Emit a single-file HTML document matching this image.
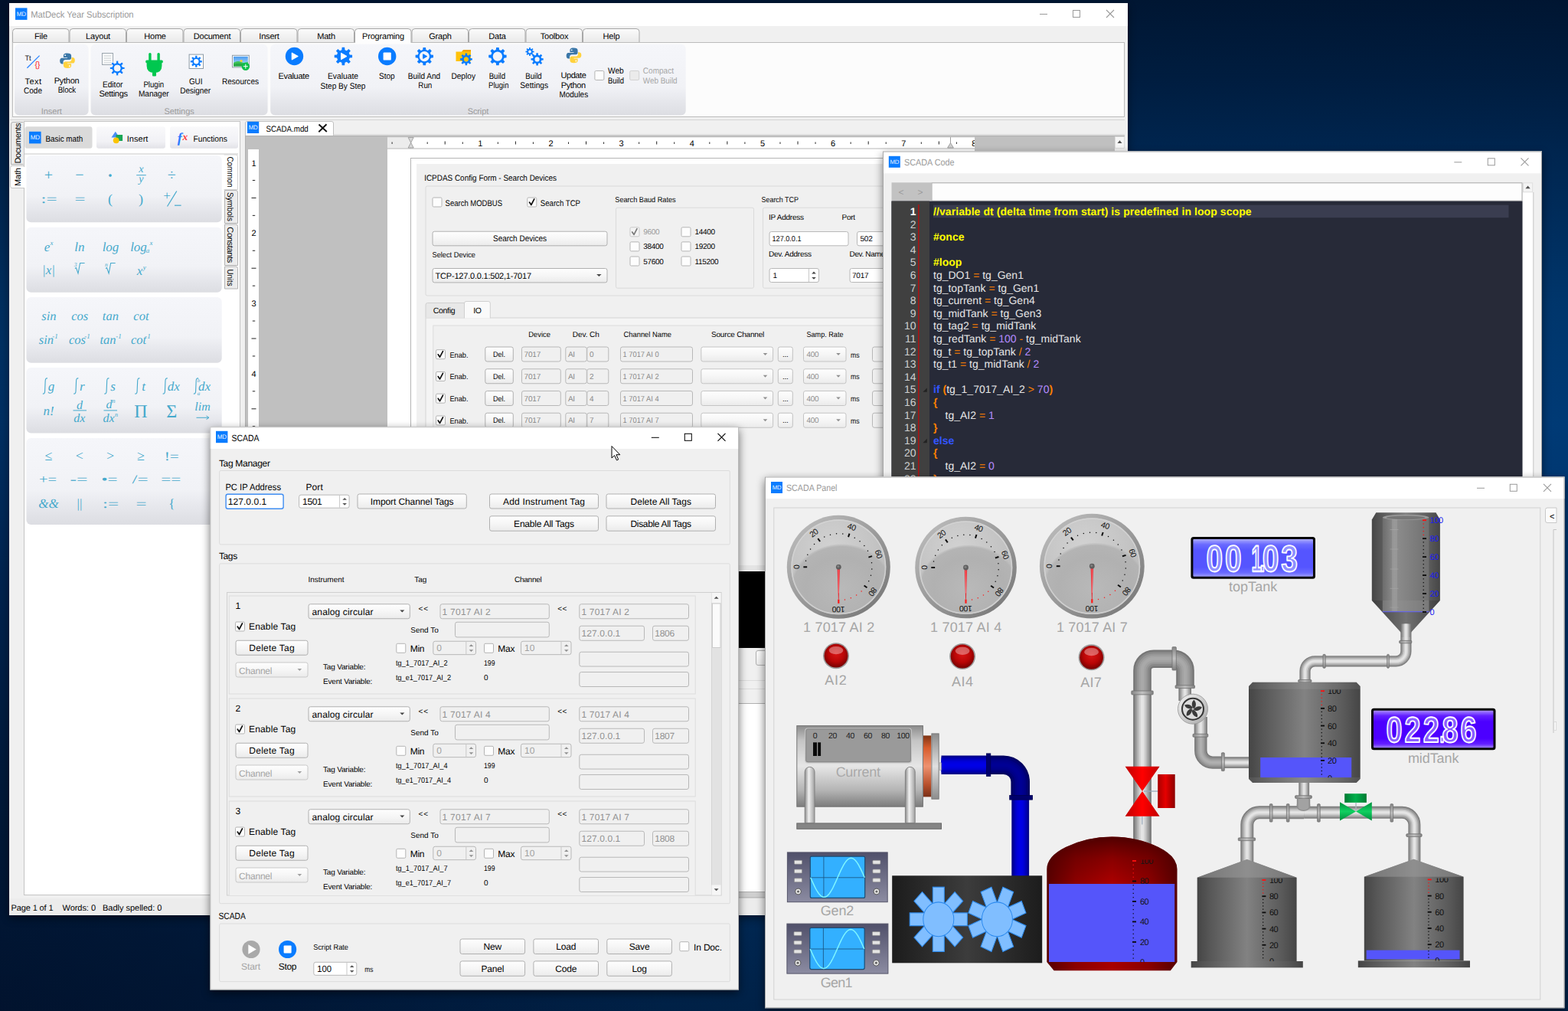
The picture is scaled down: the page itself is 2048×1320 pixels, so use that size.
<!DOCTYPE html>
<html lang="en"><head><meta charset="utf-8"><title>MatDeck SCADA</title>
<style>
html,body{margin:0;padding:0;background:#001a38;overflow:hidden}
svg{display:block}
text{font-family:"Liberation Sans",sans-serif;white-space:pre}
.lserif{font-family:"Liberation Serif",serif}
.lm{font-family:"Liberation Mono",monospace}
.dj{font-family:"DejaVu Sans","Liberation Sans",sans-serif}
</style></head><body>
<svg width="2048" height="1320" viewBox="0 0 2048 1320" text-rendering="geometricPrecision">
<defs>
<linearGradient id="bgv" x1="0" y1="0" x2="0" y2="1">
 <stop offset="0" stop-color="#00132d"/><stop offset="0.08" stop-color="#001b3c"/><stop offset="0.15" stop-color="#00244d"/><stop offset="0.3" stop-color="#00366c"/><stop offset="0.42" stop-color="#003b77"/><stop offset="0.6" stop-color="#003169"/><stop offset="0.8" stop-color="#002b59"/><stop offset="0.92" stop-color="#002853"/><stop offset="1" stop-color="#00234a"/>
</linearGradient>
<radialGradient id="bgr" cx="0.7" cy="0.4" r="0.8">
 <stop offset="0" stop-color="#004a90" stop-opacity="0.0"/><stop offset="1" stop-color="#000c22" stop-opacity="0.25"/>
</radialGradient>
<radialGradient id="bgbl" gradientUnits="userSpaceOnUse" cx="-100" cy="1420" r="980">
 <stop offset="0" stop-color="#020c22" stop-opacity="0.7"/><stop offset="0.45" stop-color="#020e26" stop-opacity="0.48"/><stop offset="1" stop-color="#021030" stop-opacity="0"/>
</radialGradient>
<filter id="shadow" x="-5%" y="-5%" width="110%" height="110%"><feGaussianBlur stdDeviation="6"/></filter>


<clipPath id="rulclip"><rect x="506" y="179" width="767" height="15"/></clipPath>
<linearGradient id="tabg" x1="0" y1="0" x2="0" y2="1"><stop offset="0" stop-color="#fbfbfb"/><stop offset="1" stop-color="#e9e9e9"/></linearGradient>
<linearGradient id="grp" x1="0" y1="0" x2="0" y2="1"><stop offset="0" stop-color="#f5f6fa"/><stop offset="0.6" stop-color="#f1f2f6"/><stop offset="0.8" stop-color="#e6e7ec"/><stop offset="1" stop-color="#dcdde2"/></linearGradient>
<linearGradient id="btng" x1="0" y1="0" x2="0" y2="1"><stop offset="0" stop-color="#f9f9fb"/><stop offset="0.7" stop-color="#f1f1f5"/><stop offset="1" stop-color="#e2e2e7"/></linearGradient>
<linearGradient id="qbtn" x1="0" y1="0" x2="0" y2="1"><stop offset="0" stop-color="#fefefe"/><stop offset="0.5" stop-color="#f6f6f6"/><stop offset="1" stop-color="#ebebeb"/></linearGradient>
<linearGradient id="sky" x1="0" y1="0" x2="0" y2="1"><stop offset="0" stop-color="#4a9cf0"/><stop offset="1" stop-color="#bfe2fb"/></linearGradient>


<clipPath id="tagclip"><rect x="296" y="773.5" width="633" height="395.5"/></clipPath>

<linearGradient id="gring" x1="0.15" y1="0.1" x2="0.85" y2="0.9"><stop offset="0" stop-color="#b8b8b8"/><stop offset="0.5" stop-color="#9a9a9a"/><stop offset="1" stop-color="#7c7c7c"/></linearGradient>
<radialGradient id="gface" cx="0.42" cy="0.30" r="0.75"><stop offset="0" stop-color="#d2d2d2"/><stop offset="0.6" stop-color="#c4c4c4"/><stop offset="1" stop-color="#b8b8b8"/></radialGradient>
<radialGradient id="glens" cx="0.5" cy="0.5" r="0.5"><stop offset="0" stop-color="#b9b9b9"/><stop offset="0.7" stop-color="#b1b1b1"/><stop offset="0.95" stop-color="#b4b4b4"/><stop offset="1" stop-color="#bcbcbc" stop-opacity="0.4"/></radialGradient>
<radialGradient id="ledg" cx="0.5" cy="0.42" r="0.62"><stop offset="0" stop-color="#d81414"/><stop offset="0.55" stop-color="#b80606"/><stop offset="1" stop-color="#6a0000"/></radialGradient>
<linearGradient id="lcd1" x1="0" y1="0" x2="0" y2="1"><stop offset="0" stop-color="#a9a9ff"/><stop offset="0.14" stop-color="#6a6aff"/><stop offset="0.3" stop-color="#5555ff"/><stop offset="0.75" stop-color="#5555ff"/><stop offset="0.9" stop-color="#6a6aff"/><stop offset="1" stop-color="#9d9dff"/></linearGradient>
<linearGradient id="lcd2" x1="0" y1="0" x2="0" y2="1"><stop offset="0" stop-color="#a88cff"/><stop offset="0.14" stop-color="#6420ff"/><stop offset="0.3" stop-color="#4c00ff"/><stop offset="0.75" stop-color="#4c00ff"/><stop offset="0.9" stop-color="#6420ff"/><stop offset="1" stop-color="#9c80ff"/></linearGradient>
<linearGradient id="tankg" x1="0" y1="0" x2="1" y2="0"><stop offset="0" stop-color="#454545"/><stop offset="0.12" stop-color="#565656"/><stop offset="0.5" stop-color="#828282"/><stop offset="0.85" stop-color="#5a5a5a"/><stop offset="1" stop-color="#454545"/></linearGradient>
<linearGradient id="tankg2" x1="0" y1="0" x2="1" y2="0"><stop offset="0" stop-color="#555"/><stop offset="0.5" stop-color="#909090"/><stop offset="1" stop-color="#555"/></linearGradient>
<linearGradient id="glassg" x1="0" y1="0" x2="1" y2="0"><stop offset="0" stop-color="#6c6c6c"/><stop offset="0.25" stop-color="#8e8e8e"/><stop offset="0.5" stop-color="#848484"/><stop offset="1" stop-color="#707070"/></linearGradient>
<radialGradient id="redg" cx="0.5" cy="0.32" r="0.62"><stop offset="0" stop-color="#ad0000"/><stop offset="0.5" stop-color="#960000"/><stop offset="1" stop-color="#500000"/></radialGradient>
<linearGradient id="redh" x1="0" y1="0" x2="1" y2="0"><stop offset="0" stop-color="#560000"/><stop offset="0.22" stop-color="#8a0000"/><stop offset="0.5" stop-color="#a80000"/><stop offset="0.78" stop-color="#8a0000"/><stop offset="1" stop-color="#560000"/></linearGradient>
<linearGradient id="redtop" gradientUnits="userSpaceOnUse" x1="0" y1="1092" x2="0" y2="1150"><stop offset="0" stop-color="#300000" stop-opacity="0.75"/><stop offset="0.5" stop-color="#400000" stop-opacity="0.3"/><stop offset="1" stop-color="#400000" stop-opacity="0"/></linearGradient>
<linearGradient id="motorg" x1="0" y1="0" x2="0" y2="1"><stop offset="0" stop-color="#8c8c8c"/><stop offset="0.18" stop-color="#c4c4c4"/><stop offset="0.5" stop-color="#e6e6e6"/><stop offset="0.8" stop-color="#b4b4b4"/><stop offset="1" stop-color="#7c7c7c"/></linearGradient>
<linearGradient id="legg" x1="0" y1="0" x2="1" y2="0"><stop offset="0" stop-color="#8a8a8a"/><stop offset="0.4" stop-color="#f0f0f0"/><stop offset="1" stop-color="#a0a0a0"/></linearGradient>
<linearGradient id="copg" x1="0" y1="0" x2="0" y2="1"><stop offset="0" stop-color="#7e3414"/><stop offset="0.2" stop-color="#d85c2c"/><stop offset="0.5" stop-color="#ee9270"/><stop offset="0.8" stop-color="#b8502c"/><stop offset="1" stop-color="#7a3018"/></linearGradient>
<linearGradient id="plateg" x1="0" y1="0" x2="0" y2="1"><stop offset="0" stop-color="#8c8c8c"/><stop offset="0.5" stop-color="#e0e0e0"/><stop offset="1" stop-color="#8c8c8c"/></linearGradient>
<linearGradient id="flh" x1="0" y1="0" x2="1" y2="0"><stop offset="0" stop-color="#858585"/><stop offset="0.5" stop-color="#c2c2c2"/><stop offset="1" stop-color="#808080"/></linearGradient>
<linearGradient id="flv" x1="0" y1="0" x2="0" y2="1"><stop offset="0" stop-color="#858585"/><stop offset="0.5" stop-color="#c2c2c2"/><stop offset="1" stop-color="#808080"/></linearGradient>
<linearGradient id="geng" x1="0" y1="0" x2="0" y2="1"><stop offset="0" stop-color="#50506a"/><stop offset="0.5" stop-color="#6e6e86"/><stop offset="1" stop-color="#8c8ca2"/></linearGradient>
<linearGradient id="gbox" x1="0" y1="0" x2="1" y2="0"><stop offset="0" stop-color="#1c1c1c"/><stop offset="0.5" stop-color="#3c3c3c"/><stop offset="1" stop-color="#1c1c1c"/></linearGradient>
<linearGradient id="redv" x1="0" y1="0" x2="1" y2="0"><stop offset="0" stop-color="#c00000"/><stop offset="0.5" stop-color="#ff0000"/><stop offset="1" stop-color="#c00000"/></linearGradient>
<linearGradient id="redact" x1="0" y1="0" x2="1" y2="0"><stop offset="0" stop-color="#a80000"/><stop offset="0.45" stop-color="#e60000"/><stop offset="1" stop-color="#8c0000"/></linearGradient>
<linearGradient id="grnv" x1="0" y1="0" x2="0" y2="1"><stop offset="0" stop-color="#008c3c"/><stop offset="0.5" stop-color="#10d060"/><stop offset="1" stop-color="#008c3c"/></linearGradient>
<linearGradient id="grnact" x1="0" y1="0" x2="1" y2="0"><stop offset="0" stop-color="#007a32"/><stop offset="0.5" stop-color="#00b04c"/><stop offset="1" stop-color="#007a32"/></linearGradient>
<linearGradient id="pumpg" x1="0" y1="0" x2="1" y2="1"><stop offset="0" stop-color="#f4f4f4"/><stop offset="1" stop-color="#a8a8a8"/></linearGradient>
<clipPath id="clipmid"><rect x="1631" y="900.6" width="146" height="114.6"/></clipPath>
<clipPath id="clipred"><rect x="1367" y="1122.6" width="171" height="133.6"/></clipPath>
<clipPath id="clipsl"><rect x="1563" y="1147" width="131" height="108"/></clipPath>
<clipPath id="clipsr"><rect x="1781" y="1146.4" width="131" height="108"/></clipPath>
<clipPath id="clippanel"><rect x="999" y="622.5" width="1044.5" height="694"/></clipPath>
</defs>
<g id="p_bg"><rect x="0" y="0" width="2048" height="1320" fill="url(#bgv)" /><rect x="0" y="0" width="2048" height="1320" fill="url(#bgr)" /><rect x="0" y="0" width="2048" height="1320" fill="url(#bgbl)" /></g>
<g id="p_main"><rect x="12" y="8" width="1461" height="1191" fill="#000" opacity="0.45" filter="url(#shadow)"/><rect x="12" y="4" width="1461" height="1191" fill="#f0f0f0" /><rect x="12" y="1173" width="1461" height="22" fill="#ececec" /><rect x="12" y="4" width="1461" height="30" fill="#ffffff" /><rect x="20" y="10.4" width="15.5" height="15.5" fill="#0a7cff" /><text x="27.75" y="20.94" font-size="8.06" fill="#e8f2ff" text-anchor="middle" letter-spacing="-0.3" font-weight="400">MD</text><text x="40.3" y="23.1" font-size="12" fill="#999" lengthAdjust="spacingAndGlyphs" textLength="134.3" >MatDeck Year Subscription</text><rect x="1358" y="18" width="10" height="1" fill="#9a9a9a" /><rect x="1401.5" y="13.5" width="9" height="9" fill="none" stroke="#9a9a9a" stroke-width="1" /><path d="M1445 13 l10 10 M1455 13 l-10 10" stroke="#9a9a9a" stroke-width="1.1" fill="none"/><path d="M16.5 55.5 V41.5 Q16.5 37.5 20.5 37.5 H86 Q90 37.5 90 41.5 V55.5" fill="url(#tabg)" stroke="#a8a8a8"/><text x="53.5" y="51.2" font-size="11" fill="#000" text-anchor="middle" letter-spacing="-0.2" >File</text><path d="M91 55.5 V41.5 Q91 37.5 95 37.5 H160.5 Q164.5 37.5 164.5 41.5 V55.5" fill="url(#tabg)" stroke="#a8a8a8"/><text x="128" y="51.2" font-size="11" fill="#000" text-anchor="middle" letter-spacing="-0.2" >Layout</text><path d="M165.5 55.5 V41.5 Q165.5 37.5 169.5 37.5 H235 Q239 37.5 239 41.5 V55.5" fill="url(#tabg)" stroke="#a8a8a8"/><text x="202.5" y="51.2" font-size="11" fill="#000" text-anchor="middle" letter-spacing="-0.2" >Home</text><path d="M240 55.5 V41.5 Q240 37.5 244 37.5 H309.5 Q313.5 37.5 313.5 41.5 V55.5" fill="url(#tabg)" stroke="#a8a8a8"/><text x="277" y="51.2" font-size="11" fill="#000" text-anchor="middle" letter-spacing="-0.2" >Document</text><path d="M314.5 55.5 V41.5 Q314.5 37.5 318.5 37.5 H384 Q388 37.5 388 41.5 V55.5" fill="url(#tabg)" stroke="#a8a8a8"/><text x="351.5" y="51.2" font-size="11" fill="#000" text-anchor="middle" letter-spacing="-0.2" >Insert</text><path d="M389 55.5 V41.5 Q389 37.5 393 37.5 H458.5 Q462.5 37.5 462.5 41.5 V55.5" fill="url(#tabg)" stroke="#a8a8a8"/><text x="426" y="51.2" font-size="11" fill="#000" text-anchor="middle" letter-spacing="-0.2" >Math</text><path d="M463.5 57 V41.5 Q463.5 37.5 467.5 37.5 H533 Q537 37.5 537 41.5 V57" fill="#fdfdfd" stroke="#a8a8a8"/><text x="500.5" y="51.2" font-size="11" fill="#000" text-anchor="middle" letter-spacing="-0.2" >Programing</text><path d="M538 55.5 V41.5 Q538 37.5 542 37.5 H607.5 Q611.5 37.5 611.5 41.5 V55.5" fill="url(#tabg)" stroke="#a8a8a8"/><text x="575" y="51.2" font-size="11" fill="#000" text-anchor="middle" letter-spacing="-0.2" >Graph</text><path d="M612.5 55.5 V41.5 Q612.5 37.5 616.5 37.5 H682 Q686 37.5 686 41.5 V55.5" fill="url(#tabg)" stroke="#a8a8a8"/><text x="649.5" y="51.2" font-size="11" fill="#000" text-anchor="middle" letter-spacing="-0.2" >Data</text><path d="M687 55.5 V41.5 Q687 37.5 691 37.5 H756.5 Q760.5 37.5 760.5 41.5 V55.5" fill="url(#tabg)" stroke="#a8a8a8"/><text x="724" y="51.2" font-size="11" fill="#000" text-anchor="middle" letter-spacing="-0.2" >Toolbox</text><path d="M761.5 55.5 V41.5 Q761.5 37.5 765.5 37.5 H831 Q835 37.5 835 41.5 V55.5" fill="url(#tabg)" stroke="#a8a8a8"/><text x="798.5" y="51.2" font-size="11" fill="#000" text-anchor="middle" letter-spacing="-0.2" >Help</text><rect x="16.5" y="55.5" width="1452" height="97" fill="#fcfcfc" stroke="#bcbcbc" stroke-width="1" /><rect x="464" y="55" width="72.5" height="1.5" fill="#fdfdfd" /><rect x="19" y="57.8" width="96.6" height="92.8" fill="url(#grp)" rx="6" /><text x="67.3" y="148.6" font-size="11" fill="#9c9c9c" text-anchor="middle" letter-spacing="-0.1" >Insert</text><rect x="118.6" y="57.8" width="231" height="92.8" fill="url(#grp)" rx="6" /><text x="234.1" y="148.6" font-size="11" fill="#9c9c9c" text-anchor="middle" letter-spacing="-0.1" >Settings</text><rect x="353.2" y="57.8" width="542.5" height="92.8" fill="url(#grp)" rx="6" /><text x="624.45" y="148.6" font-size="11" fill="#9c9c9c" text-anchor="middle" letter-spacing="-0.1" >Script</text><text x="32.5" y="79.3" font-size="9.5" fill="#222" letter-spacing="-0.3" >Tt</text><line x1="35.4" y1="88.8" x2="51.6" y2="72.6" stroke="#2e86ff" stroke-width="1.3" /><text x="45.6" y="87.6" font-size="11" fill="#ff2a2a" letter-spacing="-0.6" >{}</text><text x="32.55" y="109.8" font-size="11" fill="#000" textLength="21.5" >Text</text><text x="31" y="121.9" font-size="11" fill="#000" lengthAdjust="spacingAndGlyphs" textLength="24" >Code</text><g transform="translate(88 79.2) scale(0.98)"><path d="M-0.3 -10 C-5 -10 -5.2 -8 -5.2 -6.5 L-5.2 -4.2 L0 -4.2 L0 -3.4 L-7.2 -3.4 C-9.8 -3.4 -10 -0.5 -10 0.3 C-10 2 -9.5 4.3 -7.2 4.3 L-5.6 4.3 L-5.6 1.8 C-5.6 -0.2 -4 -1.2 -2.6 -1.2 L2.6 -1.2 C4.2 -1.2 5.2 -2.4 5.2 -3.8 L5.2 -6.5 C5.2 -9 3.4 -10 -0.3 -10 Z" fill="#3b77a8"/><circle cx="-2.9" cy="-7.2" r="0.95" fill="#fff"/><path d="M0.3 10 C5 10 5.2 8 5.2 6.5 L5.2 4.2 L0 4.2 L0 3.4 L7.2 3.4 C9.8 3.4 10 0.5 10 -0.3 C10 -2 9.5 -4.3 7.2 -4.3 L5.6 -4.3 L5.6 -1.8 C5.6 0.2 4 1.2 2.6 1.2 L-2.6 1.2 C-4.2 1.2 -5.2 2.4 -5.2 3.8 L-5.2 6.5 C-5.2 9 -3.4 10 0.3 10 Z" fill="#ffd23e"/><circle cx="2.9" cy="7.2" r="0.95" fill="#fff"/></g><text x="70.7" y="108.9" font-size="11" fill="#000" textLength="33" >Python</text><text x="75.7" y="121" font-size="11" fill="#000" lengthAdjust="spacingAndGlyphs" textLength="23.4" >Block</text><rect x="133.5" y="69.5" width="14" height="15" fill="#fff" stroke="#9aa4ad" stroke-width="1" /><rect x="135.5" y="72.5" width="10" height="1" fill="#c4c9ce" /><rect x="135.5" y="75.5" width="10" height="1" fill="#c4c9ce" /><rect x="135.5" y="78.5" width="10" height="1" fill="#c4c9ce" /><rect x="135.5" y="81.5" width="10" height="1" fill="#c4c9ce" /><path d="M159.99 87.31 L163.09 87.51 L163.09 90.49 L159.99 90.69 L159.2 92.61 L161.24 94.94 L159.14 97.04 L156.81 95 L154.89 95.79 L154.69 98.89 L151.71 98.89 L151.51 95.79 L149.59 95 L147.26 97.04 L145.16 94.94 L147.2 92.61 L146.41 90.69 L143.31 90.49 L143.31 87.51 L146.41 87.31 L147.2 85.39 L145.16 83.06 L147.26 80.96 L149.59 83 L151.51 82.21 L151.71 79.11 L154.69 79.11 L154.89 82.21 L156.81 83 L159.14 80.96 L161.24 83.06 L159.2 85.39 Z M149.2 89 a4 4 0 1 0 8 0 a4 4 0 1 0 -8 0 Z" fill="#0a7cff" fill-rule="evenodd" stroke="#f3f4f8" stroke-width="1"/><text x="133.9" y="113.8" font-size="11" fill="#000" lengthAdjust="spacingAndGlyphs" textLength="26.6" >Editor</text><text x="129.45" y="126" font-size="11" fill="#000" textLength="37.5" >Settings</text><rect x="194.2" y="69" width="3.4" height="12" fill="#00c74f" rx="1.6" /><rect x="205.4" y="69" width="3.4" height="12" fill="#00c74f" rx="1.6" /><rect x="190.2" y="78.6" width="22.6" height="3.6" fill="#00c74f" rx="1.5" /><path d="M191.6 81 H211.4 V86 Q211.4 95 201.5 95 Q191.6 95 191.6 86 Z" fill="#00c74f"/><rect x="199" y="94" width="5" height="5.6" fill="#00c74f" rx="1" /><text x="187.45" y="113.8" font-size="11" fill="#000" lengthAdjust="spacingAndGlyphs" textLength="26.7" >Plugin</text><text x="180.9" y="126" font-size="11" fill="#000" lengthAdjust="spacingAndGlyphs" textLength="39.8" >Manager</text><rect x="247.1" y="71.1" width="18.4" height="18.4" fill="#fff" stroke="#8c9aa6" stroke-width="1" /><path d="M261.35 79.05 L263.82 79.17 L263.82 81.43 L261.35 81.55 L260.75 82.98 L262.41 84.82 L260.82 86.41 L258.98 84.75 L257.55 85.35 L257.43 87.82 L255.17 87.82 L255.05 85.35 L253.62 84.75 L251.78 86.41 L250.19 84.82 L251.85 82.98 L251.25 81.55 L248.78 81.43 L248.78 79.17 L251.25 79.05 L251.85 77.62 L250.19 75.78 L251.78 74.19 L253.62 75.85 L255.05 75.25 L255.17 72.78 L257.43 72.78 L257.55 75.25 L258.98 75.85 L260.82 74.19 L262.41 75.78 L260.75 77.62 Z M253.1 80.3 a3.2 3.2 0 1 0 6.4 0 a3.2 3.2 0 1 0 -6.4 0 Z" fill="#0a7cff" fill-rule="evenodd" /><text x="246.9" y="109.7" font-size="11" fill="#000" lengthAdjust="spacingAndGlyphs" textLength="17.6" >GUI</text><text x="235.2" y="122" font-size="11" fill="#000" lengthAdjust="spacingAndGlyphs" textLength="40" >Designer</text><rect x="303.5" y="72.3" width="21.8" height="15.6" fill="#fff" stroke="#8c9aa6" stroke-width="1" /><rect x="305" y="73.8" width="18.8" height="12.6" fill="url(#sky)" /><circle cx="315" cy="79.5" r="1.6" fill="#ffd426"/><path d="M305 82 Q310 78.5 315 81 T323.8 80.5 V86.4 H305 Z" fill="#3ec356"/><path d="M305 84 Q312 81 323.8 84.6 V86.4 H305 Z" fill="#2aa847"/><circle cx="320.8" cy="86.7" r="5.2" fill="#10c04a"/><rect x="317.8" y="86.2" width="6" height="1" fill="#fff" /><rect x="320.3" y="83.7" width="1" height="6" fill="#fff" /><text x="290" y="109.7" font-size="11" fill="#000" lengthAdjust="spacingAndGlyphs" textLength="48" >Resources</text><circle cx="384.5" cy="73.5" r="11.7" fill="#0a7cff"/><path d="M381.19 68.91 L389.33 73.5 L381.19 78.09 Z" fill="#fff" stroke="#fff" stroke-width="1" stroke-linejoin="round"/><text x="363.55" y="103" font-size="11" fill="#000" textLength="40.5" >Evaluate</text><path d="M456.75 71.43 L460.07 71.75 L460.07 75.25 L456.75 75.57 L455.77 77.94 L457.89 80.51 L455.41 82.99 L452.84 80.87 L450.47 81.85 L450.15 85.17 L446.65 85.17 L446.33 81.85 L443.96 80.87 L441.39 82.99 L438.91 80.51 L441.03 77.94 L440.05 75.57 L436.73 75.25 L436.73 71.75 L440.05 71.43 L441.03 69.06 L438.91 66.49 L441.39 64.01 L443.96 66.13 L446.33 65.15 L446.65 61.83 L450.15 61.83 L450.47 65.15 L452.84 66.13 L455.41 64.01 L457.89 66.49 L455.77 69.06 Z" fill="#0a7cff" fill-rule="evenodd" /><path d="M445.54 69.28 L453.02 73.5 L445.54 77.72 Z" fill="#fff" stroke="#fff" stroke-width="1" stroke-linejoin="round"/><text x="428" y="103" font-size="11" fill="#000" lengthAdjust="spacingAndGlyphs" textLength="40" >Evaluate</text><text x="418.5" y="115.5" font-size="11" fill="#000" lengthAdjust="spacingAndGlyphs" textLength="59" >Step By Step</text><circle cx="505.7" cy="73.5" r="11.7" fill="#0a7cff"/><rect x="500.6" y="68.4" width="10.2" height="10.2" fill="#fff" rx="1.2" /><text x="494.9" y="103" font-size="11" fill="#000" lengthAdjust="spacingAndGlyphs" textLength="20.8" >Stop</text><path d="M562.84 71.48 L565.97 71.85 L565.97 75.35 L562.84 75.72 L561.84 78.14 L563.79 80.61 L561.31 83.09 L558.84 81.14 L556.42 82.14 L556.05 85.27 L552.55 85.27 L552.18 82.14 L549.76 81.14 L547.29 83.09 L544.81 80.61 L546.76 78.14 L545.76 75.72 L542.63 75.35 L542.63 71.85 L545.76 71.48 L546.76 69.06 L544.81 66.59 L547.29 64.11 L549.76 66.06 L552.18 65.06 L552.55 61.93 L556.05 61.93 L556.42 65.06 L558.84 66.06 L561.31 64.11 L563.79 66.59 L561.84 69.06 Z M547.7 73.6 a6.6 6.6 0 1 0 13.2 0 a6.6 6.6 0 1 0 -13.2 0 Z" fill="#0a7cff" fill-rule="evenodd" /><path d="M552.67 70.75 L557.73 73.6 L552.67 76.45 Z" fill="#0a7cff" stroke="#0a7cff" stroke-width="1" stroke-linejoin="round"/><text x="532.8" y="103" font-size="11" fill="#000" lengthAdjust="spacingAndGlyphs" textLength="42.4" >Build And</text><text x="546.3" y="115.4" font-size="11" fill="#000" lengthAdjust="spacingAndGlyphs" textLength="18" >Run</text><path d="M595.5 67.5 H603 L605 65.3 H615 V80 H595.5 Z" fill="#ffc20a"/><path d="M603.5 67.2 L605.2 65.3 H615 V67.2 Z" fill="#f09a00"/><path d="M614.33 76.05 L616.81 76.21 L616.81 78.59 L614.33 78.75 L613.7 80.29 L615.34 82.15 L613.65 83.84 L611.79 82.2 L610.25 82.83 L610.09 85.31 L607.71 85.31 L607.55 82.83 L606.01 82.2 L604.15 83.84 L602.46 82.15 L604.1 80.29 L603.47 78.75 L600.99 78.59 L600.99 76.21 L603.47 76.05 L604.1 74.51 L602.46 72.65 L604.15 70.96 L606.01 72.6 L607.55 71.97 L607.71 69.49 L610.09 69.49 L610.25 71.97 L611.79 72.6 L613.65 70.96 L615.34 72.65 L613.7 74.51 Z M606.1 77.4 a2.8 2.8 0 1 0 5.6 0 a2.8 2.8 0 1 0 -5.6 0 Z" fill="#0a7cff" fill-rule="evenodd" /><circle cx="608.9" cy="77.4" r="2.8" fill="#ffc20a"/><text x="589.4" y="103" font-size="11" fill="#000" lengthAdjust="spacingAndGlyphs" textLength="31.6" >Deploy</text><path d="M658.44 71.48 L661.57 71.85 L661.57 75.35 L658.44 75.72 L657.44 78.14 L659.39 80.61 L656.91 83.09 L654.44 81.14 L652.02 82.14 L651.65 85.27 L648.15 85.27 L647.78 82.14 L645.36 81.14 L642.89 83.09 L640.41 80.61 L642.36 78.14 L641.36 75.72 L638.23 75.35 L638.23 71.85 L641.36 71.48 L642.36 69.06 L640.41 66.59 L642.89 64.11 L645.36 66.06 L647.78 65.06 L648.15 61.93 L651.65 61.93 L652.02 65.06 L654.44 66.06 L656.91 64.11 L659.39 66.59 L657.44 69.06 Z M643.7 73.6 a6.2 6.2 0 1 0 12.4 0 a6.2 6.2 0 1 0 -12.4 0 Z" fill="#0a7cff" fill-rule="evenodd" /><text x="638.7" y="103" font-size="11" fill="#000" lengthAdjust="spacingAndGlyphs" textLength="21.4" >Build</text><text x="638.1" y="115.4" font-size="11" fill="#000" lengthAdjust="spacingAndGlyphs" textLength="26.4" >Plugin</text><path d="M695.78 66.56 L697.54 66.67 L697.54 68.33 L695.78 68.44 L695.34 69.51 L696.5 70.83 L695.33 72 L694.01 70.84 L692.94 71.28 L692.83 73.04 L691.17 73.04 L691.06 71.28 L689.99 70.84 L688.67 72 L687.5 70.83 L688.66 69.51 L688.22 68.44 L686.46 68.33 L686.46 66.67 L688.22 66.56 L688.66 65.49 L687.5 64.17 L688.67 63 L689.99 64.16 L691.06 63.72 L691.17 61.96 L692.83 61.96 L692.94 63.72 L694.01 64.16 L695.33 63 L696.5 64.17 L695.34 65.49 Z M690.1 67.5 a1.9 1.9 0 1 0 3.8 0 a1.9 1.9 0 1 0 -3.8 0 Z" fill="#0a7cff" fill-rule="evenodd" /><path d="M707.23 76 L709.71 76.18 L709.71 78.62 L707.23 78.8 L706.57 80.39 L708.2 82.27 L706.47 84 L704.59 82.37 L703 83.03 L702.82 85.51 L700.38 85.51 L700.2 83.03 L698.61 82.37 L696.73 84 L695 82.27 L696.63 80.39 L695.97 78.8 L693.49 78.62 L693.49 76.18 L695.97 76 L696.63 74.41 L695 72.53 L696.73 70.8 L698.61 72.43 L700.2 71.77 L700.38 69.29 L702.82 69.29 L703 71.77 L704.59 72.43 L706.47 70.8 L708.2 72.53 L706.57 74.41 Z M698.5 77.4 a3.1 3.1 0 1 0 6.2 0 a3.1 3.1 0 1 0 -6.2 0 Z" fill="#0a7cff" fill-rule="evenodd" /><text x="686.3" y="103" font-size="11" fill="#000" lengthAdjust="spacingAndGlyphs" textLength="21.4" >Build</text><text x="679.3" y="115.4" font-size="11" fill="#000" lengthAdjust="spacingAndGlyphs" textLength="36.8" >Settings</text><g transform="translate(749.5 72.4) scale(0.98)"><path d="M-0.3 -10 C-5 -10 -5.2 -8 -5.2 -6.5 L-5.2 -4.2 L0 -4.2 L0 -3.4 L-7.2 -3.4 C-9.8 -3.4 -10 -0.5 -10 0.3 C-10 2 -9.5 4.3 -7.2 4.3 L-5.6 4.3 L-5.6 1.8 C-5.6 -0.2 -4 -1.2 -2.6 -1.2 L2.6 -1.2 C4.2 -1.2 5.2 -2.4 5.2 -3.8 L5.2 -6.5 C5.2 -9 3.4 -10 -0.3 -10 Z" fill="#3b77a8"/><circle cx="-2.9" cy="-7.2" r="0.95" fill="#fff"/><path d="M0.3 10 C5 10 5.2 8 5.2 6.5 L5.2 4.2 L0 4.2 L0 3.4 L7.2 3.4 C9.8 3.4 10 0.5 10 -0.3 C10 -2 9.5 -4.3 7.2 -4.3 L5.6 -4.3 L5.6 -1.8 C5.6 0.2 4 1.2 2.6 1.2 L-2.6 1.2 C-4.2 1.2 -5.2 2.4 -5.2 3.8 L-5.2 6.5 C-5.2 9 -3.4 10 0.3 10 Z" fill="#ffd23e"/><circle cx="2.9" cy="7.2" r="0.95" fill="#fff"/></g><text x="732.4" y="102" font-size="11" fill="#000" textLength="33.4" >Update</text><text x="732.7" y="114.5" font-size="11" fill="#000" textLength="32.4" >Python</text><text x="730.5" y="126.5" font-size="11" fill="#000" lengthAdjust="spacingAndGlyphs" textLength="37.6" >Modules</text><rect x="776.9" y="92.5" width="12" height="12" fill="#fdfdfd" stroke="#b4b4b4" stroke-width="1" rx="1.5" /><text x="794" y="96.4" font-size="11" fill="#000" lengthAdjust="spacingAndGlyphs" textLength="20.8" >Web</text><text x="794" y="108.5" font-size="11" fill="#000" lengthAdjust="spacingAndGlyphs" textLength="20.9" >Build</text><rect x="822.7" y="92.5" width="12" height="12" fill="#ebebeb" stroke="#d2d2d2" stroke-width="1" rx="1.5" /><text x="839.8" y="96.4" font-size="11" fill="#a6a6a6" lengthAdjust="spacingAndGlyphs" textLength="40.2" >Compact</text><text x="839.8" y="108.5" font-size="11" fill="#a6a6a6" lengthAdjust="spacingAndGlyphs" textLength="44.8" >Web Build</text><rect x="13" y="156" width="1456" height="1" fill="#d4d4d4" /><path d="M30.5 159.5 H17 Q14.5 159.5 14.5 162 V214.5 H30.5" fill="#ececec" stroke="#b4b4b4"/><g transform="translate(22.6 187) rotate(-90)"><text x="-26.5" y="3.96" font-size="11" fill="#000" textLength="53" >Documents</text></g><path d="M31.5 216.5 H16 Q13.5 216.5 13.5 219 V243 Q13.5 245.5 16 245.5 H31.5" fill="#fff" stroke="#c8c8c8"/><g transform="translate(22.6 231) rotate(-90)"><text x="-12" y="3.96" font-size="11" fill="#000" textLength="24" >Math</text></g><rect x="31.5" y="158.5" width="282" height="1010" fill="#ffffff" stroke="#c4c4c4" stroke-width="1" /><rect x="31" y="218" width="1" height="27" fill="#fff" /><rect x="32.5" y="165.3" width="88" height="28.4" fill="#dadada" rx="3" /><rect x="38" y="171.8" width="15.6" height="15.6" fill="#0a7cff" /><text x="45.8" y="182.41" font-size="8.11" fill="#e8f2ff" text-anchor="middle" letter-spacing="-0.3" font-weight="400">MD</text><text x="59.5" y="184.7" font-size="11" fill="#000" lengthAdjust="spacingAndGlyphs" textLength="48.7" >Basic math</text><rect x="126" y="165.3" width="90" height="28.4" fill="url(#btng)" rx="3" /><path d="M145.5 179.5 L150.8 171.8 L156 179.5 Z" fill="#4a8df6"/><rect x="151.5" y="176" width="8.6" height="8" fill="#1aa655" /><circle cx="151.7" cy="183.3" r="3.9" fill="#fbc400"/><text x="165.8" y="184.7" font-size="11" fill="#000" textLength="27.6" >Insert</text><rect x="222" y="165.3" width="89" height="28.4" fill="url(#btng)" rx="3" /><text x="231.8" y="185.8" font-size="18" fill="#2b7bff" font-weight="bold" font-style="italic" class="lserif" >f</text><text x="238.6" y="183.4" font-size="13.5" fill="#ff3b3b" font-weight="bold" font-style="italic" class="lserif" >x</text><text x="252.5" y="184.7" font-size="11" fill="#000" lengthAdjust="spacingAndGlyphs" textLength="44.3" >Functions</text><rect x="32" y="200.5" width="279" height="1" fill="#c8c8c8" /><path d="M292.5 202 H308 Q310.5 202 310.5 204.5 V247.5 H292.5" fill="#fff" stroke="#d4d4d4"/><g transform="translate(301.4 224.5) rotate(90)"><text x="-20" y="3.96" font-size="11" fill="#000" lengthAdjust="spacingAndGlyphs" textLength="40" >Common</text></g><path d="M293.5 248.5 H308 Q310.5 248.5 310.5 251 V291.5 H293.5 Z" fill="#ececec" stroke="#b4b4b4"/><g transform="translate(301.4 270) rotate(90)"><text x="-19" y="3.96" font-size="11" fill="#000" lengthAdjust="spacingAndGlyphs" textLength="38" >Symbols</text></g><path d="M293.5 293 H308 Q310.5 293 310.5 295.5 V346.5 H293.5 Z" fill="#ececec" stroke="#b4b4b4"/><g transform="translate(301.4 319.75) rotate(90)"><text x="-23.5" y="3.96" font-size="11" fill="#000" textLength="47" >Constants</text></g><path d="M293.5 348 H308 Q310.5 348 310.5 350.5 V377 H293.5 Z" fill="#ececec" stroke="#b4b4b4"/><g transform="translate(301.4 362.5) rotate(90)"><text x="-11" y="3.96" font-size="11" fill="#000" lengthAdjust="spacingAndGlyphs" textLength="22" >Units</text></g><rect x="34.5" y="203" width="255.2" height="87.3" fill="url(#grp)" rx="6" /><rect x="34.5" y="296.7" width="255.2" height="85.1" fill="url(#grp)" rx="6" /><rect x="34.5" y="388" width="255.2" height="85.8" fill="url(#grp)" rx="6" /><rect x="34.5" y="480" width="255.2" height="85.5" fill="url(#grp)" rx="6" /><rect x="34.5" y="572" width="255.2" height="113" fill="url(#grp)" rx="6" /><text x="63.5" y="235" font-size="20" fill="#45a9cc" text-anchor="middle" class="lserif" >+</text><text x="103.9" y="234.5" font-size="20" fill="#45a9cc" text-anchor="middle" class="lserif" >−</text><text x="144" y="234.3" font-size="15" fill="#45a9cc" text-anchor="middle" class="lserif" >•</text><text x="184.3" y="225.08" font-size="14" fill="#45a9cc" text-anchor="middle" font-style="italic" class="lserif" >x</text><rect x="178.2" y="228.2" width="12.6" height="1" fill="#45a9cc" /><text x="184.3" y="238.1" font-size="14" fill="#45a9cc" text-anchor="middle" font-style="italic" class="lserif" >y</text><text x="224.3" y="235" font-size="20" fill="#45a9cc" text-anchor="middle" class="lserif" >÷</text><text x="53.5" y="264.8" font-size="16" fill="#45a9cc" textLength="21" class="lserif" lengthAdjust="spacingAndGlyphs">:=</text><text x="97.4" y="264.8" font-size="16" fill="#45a9cc" textLength="14" class="lserif" lengthAdjust="spacingAndGlyphs">=</text><text x="144" y="266.4" font-size="18" fill="#45a9cc" text-anchor="middle" class="lserif" >(</text><text x="184" y="266.4" font-size="18" fill="#45a9cc" text-anchor="middle" class="lserif" >)</text><text x="218" y="261.1" font-size="17" fill="#45a9cc" text-anchor="middle" class="lserif" >+</text><line x1="218.5" y1="269.5" x2="230.8" y2="249.5" stroke="#45a9cc" stroke-width="1.2" /><rect x="228" y="267.6" width="8.6" height="1.2" fill="#45a9cc" /><text x="61.5" y="328.1" font-size="17" fill="#45a9cc" text-anchor="middle" font-style="italic" class="lserif" >e</text><text x="67.5" y="320.2" font-size="9" fill="#45a9cc" text-anchor="middle" font-style="italic" class="lserif" >x</text><text x="103.9" y="328.1" font-size="17" fill="#45a9cc" text-anchor="middle" font-style="italic" class="lserif" >ln</text><text x="144.5" y="328.1" font-size="17" fill="#45a9cc" text-anchor="middle" font-style="italic" class="lserif" >log</text><text x="181" y="328.1" font-size="17" fill="#45a9cc" text-anchor="middle" font-style="italic" class="lserif" >log</text><text x="193" y="329.7" font-size="9" fill="#45a9cc" text-anchor="middle" font-style="italic" class="lserif" >a</text><text x="197.6" y="320.2" font-size="9" fill="#45a9cc" text-anchor="middle" font-style="italic" class="lserif" >x</text><text x="63.5" y="358.1" font-size="17" fill="#45a9cc" text-anchor="middle" font-style="italic" class="lserif" >|x|</text><path d="M97.9 350.5 l1.5 -1 l2.6 7.5 l2.6 -13.5 h6" fill="none" stroke="#45a9cc" stroke-width="1.1"/><text x="98.7" y="348.25" font-size="7.5" fill="#45a9cc" text-anchor="middle" font-style="italic" class="lserif" >3</text><path d="M138 350.5 l1.5 -1 l2.6 7.5 l2.6 -13.5 h6" fill="none" stroke="#45a9cc" stroke-width="1.1"/><text x="138.8" y="348.25" font-size="7.5" fill="#45a9cc" text-anchor="middle" font-style="italic" class="lserif" >n</text><text x="182.4" y="358.6" font-size="17" fill="#45a9cc" text-anchor="middle" font-style="italic" class="lserif" >x</text><text x="188.8" y="351.7" font-size="9" fill="#45a9cc" text-anchor="middle" font-style="italic" class="lserif" >y</text><text x="63.9" y="418.43" font-size="16.5" fill="#45a9cc" text-anchor="middle" font-style="italic" class="lserif" >sin</text><text x="60.5" y="448.62" font-size="16.5" fill="#45a9cc" text-anchor="middle" font-style="italic" class="lserif" >sin</text><text x="72" y="442.2" font-size="9" fill="#45a9cc" text-anchor="middle" font-style="italic" class="lserif" >-1</text><text x="104.3" y="418.43" font-size="16.5" fill="#45a9cc" text-anchor="middle" font-style="italic" class="lserif" >cos</text><text x="100.9" y="448.62" font-size="16.5" fill="#45a9cc" text-anchor="middle" font-style="italic" class="lserif" >cos</text><text x="113.9" y="442.2" font-size="9" fill="#45a9cc" text-anchor="middle" font-style="italic" class="lserif" >-1</text><text x="144.4" y="418.43" font-size="16.5" fill="#45a9cc" text-anchor="middle" font-style="italic" class="lserif" >tan</text><text x="141" y="448.62" font-size="16.5" fill="#45a9cc" text-anchor="middle" font-style="italic" class="lserif" >tan</text><text x="155" y="442.2" font-size="9" fill="#45a9cc" text-anchor="middle" font-style="italic" class="lserif" >-1</text><text x="184.4" y="418.43" font-size="16.5" fill="#45a9cc" text-anchor="middle" font-style="italic" class="lserif" >cot</text><text x="181" y="448.62" font-size="16.5" fill="#45a9cc" text-anchor="middle" font-style="italic" class="lserif" >cot</text><text x="193" y="442.2" font-size="9" fill="#45a9cc" text-anchor="middle" font-style="italic" class="lserif" >-1</text><path d="M62 494 q-2.6 -0.6 -2.8 3 l-0.6 14 q-0.2 3.6 -2.8 3" fill="none" stroke="#45a9cc" stroke-width="1.1"/><text x="67" y="509.6" font-size="17" fill="#45a9cc" text-anchor="middle" font-style="italic" class="lserif" >g</text><path d="M102.4 494 q-2.6 -0.6 -2.8 3 l-0.6 14 q-0.2 3.6 -2.8 3" fill="none" stroke="#45a9cc" stroke-width="1.1"/><text x="107.4" y="509.6" font-size="17" fill="#45a9cc" text-anchor="middle" font-style="italic" class="lserif" >r</text><path d="M142.5 494 q-2.6 -0.6 -2.8 3 l-0.6 14 q-0.2 3.6 -2.8 3" fill="none" stroke="#45a9cc" stroke-width="1.1"/><text x="147.5" y="509.6" font-size="17" fill="#45a9cc" text-anchor="middle" font-style="italic" class="lserif" >s</text><path d="M182.5 494 q-2.6 -0.6 -2.8 3 l-0.6 14 q-0.2 3.6 -2.8 3" fill="none" stroke="#45a9cc" stroke-width="1.1"/><text x="187.5" y="509.6" font-size="17" fill="#45a9cc" text-anchor="middle" font-style="italic" class="lserif" >t</text><path d="M218.8 494 q-2.6 -0.6 -2.8 3 l-0.6 14 q-0.2 3.6 -2.8 3" fill="none" stroke="#45a9cc" stroke-width="1.1"/><text x="226.8" y="509.6" font-size="17" fill="#45a9cc" text-anchor="middle" font-style="italic" class="lserif" >dx</text><path d="M259 494 q-2.6 -0.6 -2.8 3 l-0.6 14 q-0.2 3.6 -2.8 3" fill="none" stroke="#45a9cc" stroke-width="1.1"/><text x="267" y="509.6" font-size="17" fill="#45a9cc" text-anchor="middle" font-style="italic" class="lserif" >dx</text><text x="259.5" y="499.1" font-size="7" fill="#45a9cc" text-anchor="middle" font-style="italic" class="lserif" >b</text><text x="259.5" y="515.6" font-size="7" fill="#45a9cc" text-anchor="middle" font-style="italic" class="lserif" >a</text><text x="63.5" y="541.6" font-size="17" fill="#45a9cc" text-anchor="middle" font-style="italic" class="lserif" >n!</text><text x="103.9" y="533.8" font-size="16" fill="#45a9cc" text-anchor="middle" font-style="italic" class="lserif" >d</text><rect x="95.5" y="535.4" width="17.5" height="1" fill="#45a9cc" /><text x="103.9" y="550.8" font-size="16" fill="#45a9cc" text-anchor="middle" font-style="italic" class="lserif" >dx</text><text x="142.5" y="533.3" font-size="16" fill="#45a9cc" text-anchor="middle" font-style="italic" class="lserif" >d</text><text x="148.5" y="526.4" font-size="8" fill="#45a9cc" text-anchor="middle" font-style="italic" class="lserif" >n</text><rect x="135.5" y="535.4" width="17.5" height="1" fill="#45a9cc" /><text x="142" y="550.8" font-size="16" fill="#45a9cc" text-anchor="middle" font-style="italic" class="lserif" >dx</text><text x="152" y="544.4" font-size="8" fill="#45a9cc" text-anchor="middle" font-style="italic" class="lserif" >n</text><text x="184" y="544.92" font-size="24" fill="#45a9cc" text-anchor="middle" class="lserif" >Π</text><text x="224.3" y="544.92" font-size="24" fill="#45a9cc" text-anchor="middle" class="lserif" >Σ</text><text x="264.5" y="536.3" font-size="16" fill="#45a9cc" text-anchor="middle" font-style="italic" class="lserif" >lim</text><line x1="256.5" y1="545.3" x2="272.5" y2="545.3" stroke="#45a9cc" stroke-width="1" /><path d="M269.5 543 l3.5 2.3 l-3.5 2.3" fill="none" stroke="#45a9cc"/><text x="63.5" y="601.4" font-size="18" fill="#45a9cc" text-anchor="middle" class="lserif" >≤</text><text x="103.9" y="601.4" font-size="18" fill="#45a9cc" text-anchor="middle" class="lserif" >&lt;</text><text x="144" y="601.4" font-size="18" fill="#45a9cc" text-anchor="middle" class="lserif" >&gt;</text><text x="184" y="601.4" font-size="18" fill="#45a9cc" text-anchor="middle" class="lserif" >≥</text><text x="214.8" y="600.8" font-size="16" fill="#45a9cc" textLength="19" class="lserif" lengthAdjust="spacingAndGlyphs">!=</text><text x="51" y="631.12" font-size="16" fill="#45a9cc" textLength="23" class="lserif" lengthAdjust="spacingAndGlyphs">+=</text><text x="91.4" y="631.12" font-size="16" fill="#45a9cc" textLength="23" class="lserif" lengthAdjust="spacingAndGlyphs">-=</text><text x="132.5" y="631.12" font-size="16" fill="#45a9cc" textLength="21" class="lserif" lengthAdjust="spacingAndGlyphs">•=</text><text x="172.5" y="631.12" font-size="16" fill="#45a9cc" textLength="21" class="lserif" lengthAdjust="spacingAndGlyphs">/=</text><text x="210.3" y="631.12" font-size="16" fill="#45a9cc" textLength="26" class="lserif" lengthAdjust="spacingAndGlyphs">==</text><text x="63.5" y="663.1" font-size="17" fill="#45a9cc" text-anchor="middle" font-style="italic" class="lserif" >&amp;&amp;</text><text x="103.9" y="663.1" font-size="17" fill="#45a9cc" text-anchor="middle" class="lserif" >||</text><text x="134" y="662.8" font-size="16" fill="#45a9cc" textLength="21" class="lserif" lengthAdjust="spacingAndGlyphs">:=</text><text x="177.5" y="662.8" font-size="16" fill="#45a9cc" textLength="14" class="lserif" lengthAdjust="spacingAndGlyphs">=</text><text x="224.3" y="663.1" font-size="17" fill="#45a9cc" text-anchor="middle" class="lserif" >{</text><path d="M320.5 177 V161 Q320.5 158.5 323 158.5 H433 Q435.5 158.5 435.5 161 V177" fill="#fff" stroke="#c0c0c0"/><rect x="323" y="158.8" width="15.2" height="15.2" fill="#0a7cff" /><text x="330.6" y="169.14" font-size="7.9" fill="#e8f2ff" text-anchor="middle" letter-spacing="-0.3" font-weight="400">MD</text><text x="347.5" y="172" font-size="11" fill="#000" lengthAdjust="spacingAndGlyphs" textLength="55.3" >SCADA.mdd</text><path d="M416.5 162.5 L426.8 172 M426.5 162.3 L416.3 172.2" stroke="#111" stroke-width="1.9" fill="none"/><rect x="435" y="175.5" width="1034" height="1" fill="#cccccc" /><rect x="320.5" y="177.5" width="1148" height="995" fill="#c0c0c0" stroke="#b0b0b0" stroke-width="1" /><rect x="506" y="194" width="767" height="975" fill="#ffffff" /><rect x="324" y="195" width="14" height="974" fill="#ffffff" /><text x="331.5" y="216.5" font-size="11" fill="#000" text-anchor="middle" >1</text><rect x="329.8" y="234.95" width="3.4" height="1" fill="#222" /><rect x="328.5" y="257.9" width="6" height="1" fill="#222" /><rect x="329.8" y="280.85" width="3.4" height="1" fill="#222" /><text x="331.5" y="308.3" font-size="11" fill="#000" text-anchor="middle" >2</text><rect x="329.8" y="326.75" width="3.4" height="1" fill="#222" /><rect x="328.5" y="349.7" width="6" height="1" fill="#222" /><rect x="329.8" y="372.65" width="3.4" height="1" fill="#222" /><text x="331.5" y="400.1" font-size="11" fill="#000" text-anchor="middle" >3</text><rect x="329.8" y="418.55" width="3.4" height="1" fill="#222" /><rect x="328.5" y="441.5" width="6" height="1" fill="#222" /><rect x="329.8" y="464.45" width="3.4" height="1" fill="#222" /><text x="331.5" y="491.9" font-size="11" fill="#000" text-anchor="middle" >4</text><rect x="329.8" y="510.35" width="3.4" height="1" fill="#222" /><rect x="328.5" y="533.3" width="6" height="1" fill="#222" /><rect x="329.8" y="556.25" width="3.4" height="1" fill="#222" /><text x="331.5" y="583.7" font-size="11" fill="#000" text-anchor="middle" >5</text><rect x="329.8" y="602.15" width="3.4" height="1" fill="#222" /><rect x="328.5" y="625.1" width="6" height="1" fill="#222" /><rect x="329.8" y="648.05" width="3.4" height="1" fill="#222" /><text x="331.5" y="675.5" font-size="11" fill="#000" text-anchor="middle" >6</text><rect x="329.8" y="693.95" width="3.4" height="1" fill="#222" /><rect x="328.5" y="716.9" width="6" height="1" fill="#222" /><rect x="329.8" y="739.85" width="3.4" height="1" fill="#222" /><text x="331.5" y="767.3" font-size="11" fill="#000" text-anchor="middle" >7</text><rect x="329.8" y="785.75" width="3.4" height="1" fill="#222" /><rect x="328.5" y="808.7" width="6" height="1" fill="#222" /><rect x="329.8" y="831.65" width="3.4" height="1" fill="#222" /><text x="331.5" y="859.1" font-size="11" fill="#000" text-anchor="middle" >8</text><rect x="329.8" y="877.55" width="3.4" height="1" fill="#222" /><rect x="328.5" y="900.5" width="6" height="1" fill="#222" /><rect x="329.8" y="923.45" width="3.4" height="1" fill="#222" /><text x="331.5" y="950.9" font-size="11" fill="#000" text-anchor="middle" >9</text><rect x="329.8" y="969.35" width="3.4" height="1" fill="#222" /><rect x="328.5" y="992.3" width="6" height="1" fill="#222" /><rect x="329.8" y="1015.25" width="3.4" height="1" fill="#222" /><text x="331.5" y="1042.7" font-size="11" fill="#000" text-anchor="middle" >10</text><rect x="329.8" y="1061.15" width="3.4" height="1" fill="#222" /><rect x="328.5" y="1084.1" width="6" height="1" fill="#222" /><rect x="329.8" y="1107.05" width="3.4" height="1" fill="#222" /><text x="331.5" y="1134.5" font-size="11" fill="#000" text-anchor="middle" >11</text><rect x="329.8" y="1152.95" width="3.4" height="1" fill="#222" /><rect x="506" y="179" width="767" height="15" fill="#ffffff" /><rect x="506" y="179" width="31" height="15" fill="#ececec" /><rect x="506" y="193.5" width="767" height="1" fill="#b8b8b8" /><rect x="506" y="178.5" width="767" height="1" fill="#d0d0d0" /><rect x="511.6" y="185.5" width="1" height="2.4" fill="#222" /><rect x="557.68" y="185.5" width="1" height="2.4" fill="#222" /><rect x="580.72" y="184.5" width="1" height="4" fill="#222" /><rect x="603.76" y="185.5" width="1" height="2.4" fill="#222" /><g clip-path="url(#rulclip)"><text x="627.3" y="190.5" font-size="11" fill="#000" text-anchor="middle" >1</text></g><rect x="649.84" y="185.5" width="1" height="2.4" fill="#222" /><rect x="672.88" y="184.5" width="1" height="4" fill="#222" /><rect x="695.92" y="185.5" width="1" height="2.4" fill="#222" /><g clip-path="url(#rulclip)"><text x="719.46" y="190.5" font-size="11" fill="#000" text-anchor="middle" >2</text></g><rect x="742" y="185.5" width="1" height="2.4" fill="#222" /><rect x="765.04" y="184.5" width="1" height="4" fill="#222" /><rect x="788.08" y="185.5" width="1" height="2.4" fill="#222" /><g clip-path="url(#rulclip)"><text x="811.62" y="190.5" font-size="11" fill="#000" text-anchor="middle" >3</text></g><rect x="834.16" y="185.5" width="1" height="2.4" fill="#222" /><rect x="857.2" y="184.5" width="1" height="4" fill="#222" /><rect x="880.24" y="185.5" width="1" height="2.4" fill="#222" /><g clip-path="url(#rulclip)"><text x="903.78" y="190.5" font-size="11" fill="#000" text-anchor="middle" >4</text></g><rect x="926.32" y="185.5" width="1" height="2.4" fill="#222" /><rect x="949.36" y="184.5" width="1" height="4" fill="#222" /><rect x="972.4" y="185.5" width="1" height="2.4" fill="#222" /><g clip-path="url(#rulclip)"><text x="995.94" y="190.5" font-size="11" fill="#000" text-anchor="middle" >5</text></g><rect x="1018.48" y="185.5" width="1" height="2.4" fill="#222" /><rect x="1041.52" y="184.5" width="1" height="4" fill="#222" /><rect x="1064.56" y="185.5" width="1" height="2.4" fill="#222" /><g clip-path="url(#rulclip)"><text x="1088.1" y="190.5" font-size="11" fill="#000" text-anchor="middle" >6</text></g><rect x="1110.64" y="185.5" width="1" height="2.4" fill="#222" /><rect x="1133.68" y="184.5" width="1" height="4" fill="#222" /><rect x="1156.72" y="185.5" width="1" height="2.4" fill="#222" /><g clip-path="url(#rulclip)"><text x="1180.26" y="190.5" font-size="11" fill="#000" text-anchor="middle" >7</text></g><rect x="1202.8" y="185.5" width="1" height="2.4" fill="#222" /><rect x="1225.84" y="184.5" width="1" height="4" fill="#222" /><rect x="1248.88" y="185.5" width="1" height="2.4" fill="#222" /><g clip-path="url(#rulclip)"><text x="1272.42" y="190.5" font-size="11" fill="#000" text-anchor="middle" >8</text></g><path d="M533.2 179.5 H540.2 L536.7 186.3 L540.2 193 H533.2 L536.7 186.3 Z" fill="#d8d8d8" stroke="#909090" stroke-width="0.8"/><rect x="1241" y="179" width="1" height="8" fill="#a0a0a0" /><path d="M1237.6 193 L1241.5 186.5 L1245.4 193 Z" fill="#d0d0d0" stroke="#909090" stroke-width="0.8"/><rect x="1456" y="178" width="13" height="991" fill="#f0f0f0" /><rect x="1456.5" y="178.5" width="12" height="15" fill="#f6f6f6" stroke="#dadada" stroke-width="1" /><path d="M1459.5 187 L1462.5 183.2 L1465.5 187 Z" fill="#505050"/><rect x="536.5" y="206.5" width="736" height="962" fill="#ffffff" stroke="#b4b4b4" stroke-width="1" /><rect x="544" y="214" width="729" height="955" fill="#f0f0f0" /><text x="554.2" y="235.8" font-size="11" fill="#000" lengthAdjust="spacingAndGlyphs" textLength="172.8" >ICPDAS Config Form - Search Devices</text><rect x="556" y="243" width="719" height="143" fill="none" stroke="#dadada" stroke-width="1" rx="2" /><rect x="565" y="258" width="12" height="12" fill="#fdfdfd" stroke="#b4b4b4" stroke-width="1" rx="1.5" /><text x="581.6" y="268.6" font-size="11" fill="#000" lengthAdjust="spacingAndGlyphs" textLength="74.4" >Search MODBUS</text><rect x="688.8" y="258" width="12" height="12" fill="#fdfdfd" stroke="#b4b4b4" stroke-width="1" rx="1.5" /><path d="M691.5 264.1 l2.3 3.4 l4 -7.6" fill="none" stroke="#101010" stroke-width="1.7" stroke-linecap="round" stroke-linejoin="round"/><text x="705.8" y="268.6" font-size="11" fill="#000" lengthAdjust="spacingAndGlyphs" textLength="52.2" >Search TCP</text><rect x="565" y="302.2" width="228" height="18.6" fill="url(#qbtn)" stroke="#b0b0b0" stroke-width="1" rx="2.5" /><text x="644" y="315.46" font-size="11" fill="#000" lengthAdjust="spacingAndGlyphs" textLength="70" >Search Devices</text><text x="564.5" y="336.3" font-size="10" fill="#000" lengthAdjust="spacingAndGlyphs" textLength="56.5" >Select Device</text><rect x="565" y="350.5" width="228" height="18.4" fill="url(#qbtn)" stroke="#b0b0b0" stroke-width="1" rx="2.5" /><text x="568.6" y="363.6" font-size="11" fill="#000" textLength="125.4" >TCP-127.0.0.1:502,1-7017</text><path d="M779.2 357.9 h6.4 l-3.2 3.2 Z" fill="#444"/><text x="803.3" y="263.8" font-size="10" fill="#000" lengthAdjust="spacingAndGlyphs" textLength="79.3" >Search Baud Rates</text><rect x="804.5" y="271.2" width="180" height="105" fill="none" stroke="#dadada" stroke-width="1" rx="2" /><rect x="823" y="296.8" width="12" height="12" fill="#f4f4f4" stroke="#c8c8c8" stroke-width="1" rx="1.5" /><path d="M825.7 302.9 l2.3 3.4 l4 -7.6" fill="none" stroke="#7a7a7a" stroke-width="1.7" stroke-linecap="round" stroke-linejoin="round"/><text x="840.3" y="306.3" font-size="10" fill="#9a9a9a" letter-spacing="-0.3" >9600</text><rect x="890" y="296.8" width="12" height="12" fill="#fdfdfd" stroke="#b4b4b4" stroke-width="1" rx="1.5" /><text x="907.5" y="306.3" font-size="10" fill="#000" letter-spacing="-0.3" >14400</text><rect x="823" y="315.9" width="12" height="12" fill="#fdfdfd" stroke="#b4b4b4" stroke-width="1" rx="1.5" /><text x="840.3" y="325.4" font-size="10" fill="#000" letter-spacing="-0.3" >38400</text><rect x="890" y="315.9" width="12" height="12" fill="#fdfdfd" stroke="#b4b4b4" stroke-width="1" rx="1.5" /><text x="907.5" y="325.4" font-size="10" fill="#000" letter-spacing="-0.3" >19200</text><rect x="823" y="335" width="12" height="12" fill="#fdfdfd" stroke="#b4b4b4" stroke-width="1" rx="1.5" /><text x="840.3" y="344.5" font-size="10" fill="#000" letter-spacing="-0.3" >57600</text><rect x="890" y="335" width="12" height="12" fill="#fdfdfd" stroke="#b4b4b4" stroke-width="1" rx="1.5" /><text x="907.5" y="344.5" font-size="10" fill="#000" letter-spacing="-0.3" >115200</text><text x="994.5" y="263.8" font-size="10" fill="#000" lengthAdjust="spacingAndGlyphs" textLength="48.5" >Search TCP</text><rect x="996.5" y="271.2" width="199" height="105" fill="none" stroke="#dadada" stroke-width="1" rx="2" /><text x="1004" y="287" font-size="10" fill="#000" textLength="46" >IP Address</text><text x="1099.5" y="287" font-size="10" fill="#000" textLength="17.5" >Port</text><rect x="1005" y="302.5" width="103" height="18.3" fill="#fff" stroke="#b8b8b8" stroke-width="1" rx="2.5" /><text x="1008.5" y="315.25" font-size="10" fill="#000" lengthAdjust="spacingAndGlyphs" textLength="38" >127.0.0.1</text><rect x="1119.5" y="302.5" width="59" height="18.3" fill="#fff" stroke="#b8b8b8" stroke-width="1" rx="2.5" /><text x="1123.5" y="315.25" font-size="10" fill="#000" letter-spacing="-0.2" >502</text><text x="1004" y="334.5" font-size="10" fill="#000" textLength="56" >Dev. Address</text><text x="1109.5" y="334.5" font-size="10" fill="#000" textLength="46.5" >Dev. Name</text><rect x="1005" y="350.5" width="64.5" height="18" fill="#fff" stroke="#b8b8b8" stroke-width="1" rx="2.5" /><text x="1009.5" y="363.1" font-size="10" fill="#000" letter-spacing="-0.2" >1</text><rect x="1056" y="351" width="1" height="17" fill="#c8c8c8" /><path d="M1060.2 357.4 h5.6 l-2.8 -2.8 Z" fill="#444"/><path d="M1060.2 362 h5.6 l-2.8 2.8 Z" fill="#444"/><rect x="1110" y="350.5" width="69" height="18" fill="#fff" stroke="#b8b8b8" stroke-width="1" rx="2.5" /><text x="1113" y="363.1" font-size="10" fill="#000" letter-spacing="-0.2" >7017</text><rect x="556" y="415" width="719" height="599" fill="#f4f4f4" stroke="#d4d4d4" stroke-width="1" /><path d="M556 414.5 V398 Q556 395.5 558.5 395.5 H606.5 V414.5" fill="#e8e8e8" stroke="#d0d0d0"/><text x="565.8" y="409.3" font-size="10.5" fill="#000" textLength="28.7" >Config</text><path d="M606.5 415.5 V396 Q606.5 393.5 609 393.5 H637.8 Q640.3 393.5 640.3 396 V415.5" fill="#fafafa" stroke="#d0d0d0"/><text x="618.2" y="408.5" font-size="10.5" fill="#000" textLength="10.6" >IO</text><rect x="565.8" y="425" width="699" height="579" fill="#f0f0f0" stroke="#dcdcdc" stroke-width="1" /><text x="690.3" y="440" font-size="10" fill="#000" lengthAdjust="spacingAndGlyphs" textLength="28.7" >Device</text><text x="747.8" y="440" font-size="10" fill="#000" textLength="35" >Dev. Ch</text><text x="814.5" y="440" font-size="10" fill="#000" lengthAdjust="spacingAndGlyphs" textLength="62.5" >Channel Name</text><text x="929" y="440" font-size="10" fill="#000" textLength="69.3" >Source Channel</text><text x="1053.5" y="440" font-size="10" fill="#000" lengthAdjust="spacingAndGlyphs" textLength="48" >Samp. Rate</text><rect x="569.5" y="456.7" width="12" height="12" fill="#fdfdfd" stroke="#b4b4b4" stroke-width="1" rx="1.5" /><path d="M572.2 462.8 l2.3 3.4 l4 -7.6" fill="none" stroke="#101010" stroke-width="1.7" stroke-linecap="round" stroke-linejoin="round"/><text x="587.5" y="466.7" font-size="10" fill="#000" lengthAdjust="spacingAndGlyphs" textLength="24" >Enab.</text><rect x="633.8" y="453" width="36.5" height="19" fill="url(#qbtn)" stroke="#b0b0b0" stroke-width="1" rx="2.5" /><text x="644.05" y="466.1" font-size="10" fill="#000" lengthAdjust="spacingAndGlyphs" textLength="16" >Del.</text><rect x="681.5" y="453" width="50.8" height="19" fill="#f0f0f0" stroke="#b8b8b8" stroke-width="1" rx="2.5" /><text x="684.6" y="466.1" font-size="10" fill="#8a8a8a" letter-spacing="-0.2" >7017</text><rect x="738.8" y="453" width="27.5" height="19" fill="#f0f0f0" stroke="#b8b8b8" stroke-width="1" rx="2.5" /><text x="741.9" y="466.1" font-size="10" fill="#8a8a8a" letter-spacing="-0.2" >AI</text><rect x="766.8" y="453" width="28" height="19" fill="#f0f0f0" stroke="#b8b8b8" stroke-width="1" rx="2.5" /><text x="769.9" y="466.1" font-size="10" fill="#8a8a8a" letter-spacing="-0.2" >0</text><rect x="810.5" y="453" width="94" height="19" fill="#f0f0f0" stroke="#b8b8b8" stroke-width="1" rx="2.5" /><text x="813.6" y="466.1" font-size="10" fill="#8a8a8a" lengthAdjust="spacingAndGlyphs" textLength="47" >1 7017 AI 0</text><rect x="915.8" y="453" width="93.8" height="19" fill="url(#qbtn)" stroke="#c4c4c4" stroke-width="1" rx="2.5" /><path d="M996.7 461.1 h5.6 l-2.8 2.8 Z" fill="#909090"/><rect x="1016.3" y="453" width="19" height="19" fill="url(#qbtn)" stroke="#c0c0c0" stroke-width="1" rx="2.5" /><text x="1025.8" y="466.1" font-size="10" fill="#000" text-anchor="middle" letter-spacing="-0.2" >...</text><rect x="1049.5" y="453" width="55.5" height="19" fill="url(#qbtn)" stroke="#c4c4c4" stroke-width="1" rx="2.5" /><text x="1053.5" y="466.1" font-size="10" fill="#909090" letter-spacing="-0.3" >400</text><path d="M1092.2 461.1 h5.6 l-2.8 2.8 Z" fill="#909090"/><text x="1111" y="466.7" font-size="10" fill="#000" lengthAdjust="spacingAndGlyphs" textLength="11.5" >ms</text><rect x="1139.5" y="453" width="59" height="19" fill="#f0f0f0" stroke="#b8b8b8" stroke-width="1" rx="2.5" /><rect x="569.5" y="485.45" width="12" height="12" fill="#fdfdfd" stroke="#b4b4b4" stroke-width="1" rx="1.5" /><path d="M572.2 491.55 l2.3 3.4 l4 -7.6" fill="none" stroke="#101010" stroke-width="1.7" stroke-linecap="round" stroke-linejoin="round"/><text x="587.5" y="495.45" font-size="10" fill="#000" lengthAdjust="spacingAndGlyphs" textLength="24" >Enab.</text><rect x="633.8" y="481.75" width="36.5" height="19" fill="url(#qbtn)" stroke="#b0b0b0" stroke-width="1" rx="2.5" /><text x="644.05" y="494.85" font-size="10" fill="#000" lengthAdjust="spacingAndGlyphs" textLength="16" >Del.</text><rect x="681.5" y="481.75" width="50.8" height="19" fill="#f0f0f0" stroke="#b8b8b8" stroke-width="1" rx="2.5" /><text x="684.6" y="494.85" font-size="10" fill="#8a8a8a" letter-spacing="-0.2" >7017</text><rect x="738.8" y="481.75" width="27.5" height="19" fill="#f0f0f0" stroke="#b8b8b8" stroke-width="1" rx="2.5" /><text x="741.9" y="494.85" font-size="10" fill="#8a8a8a" letter-spacing="-0.2" >AI</text><rect x="766.8" y="481.75" width="28" height="19" fill="#f0f0f0" stroke="#b8b8b8" stroke-width="1" rx="2.5" /><text x="769.9" y="494.85" font-size="10" fill="#8a8a8a" letter-spacing="-0.2" >2</text><rect x="810.5" y="481.75" width="94" height="19" fill="#f0f0f0" stroke="#b8b8b8" stroke-width="1" rx="2.5" /><text x="813.6" y="494.85" font-size="10" fill="#8a8a8a" lengthAdjust="spacingAndGlyphs" textLength="47" >1 7017 AI 2</text><rect x="915.8" y="481.75" width="93.8" height="19" fill="url(#qbtn)" stroke="#c4c4c4" stroke-width="1" rx="2.5" /><path d="M996.7 489.85 h5.6 l-2.8 2.8 Z" fill="#909090"/><rect x="1016.3" y="481.75" width="19" height="19" fill="url(#qbtn)" stroke="#c0c0c0" stroke-width="1" rx="2.5" /><text x="1025.8" y="494.85" font-size="10" fill="#000" text-anchor="middle" letter-spacing="-0.2" >...</text><rect x="1049.5" y="481.75" width="55.5" height="19" fill="url(#qbtn)" stroke="#c4c4c4" stroke-width="1" rx="2.5" /><text x="1053.5" y="494.85" font-size="10" fill="#909090" letter-spacing="-0.3" >400</text><path d="M1092.2 489.85 h5.6 l-2.8 2.8 Z" fill="#909090"/><text x="1111" y="495.45" font-size="10" fill="#000" lengthAdjust="spacingAndGlyphs" textLength="11.5" >ms</text><rect x="1139.5" y="481.75" width="59" height="19" fill="#f0f0f0" stroke="#b8b8b8" stroke-width="1" rx="2.5" /><rect x="569.5" y="514.2" width="12" height="12" fill="#fdfdfd" stroke="#b4b4b4" stroke-width="1" rx="1.5" /><path d="M572.2 520.3 l2.3 3.4 l4 -7.6" fill="none" stroke="#101010" stroke-width="1.7" stroke-linecap="round" stroke-linejoin="round"/><text x="587.5" y="524.2" font-size="10" fill="#000" lengthAdjust="spacingAndGlyphs" textLength="24" >Enab.</text><rect x="633.8" y="510.5" width="36.5" height="19" fill="url(#qbtn)" stroke="#b0b0b0" stroke-width="1" rx="2.5" /><text x="644.05" y="523.6" font-size="10" fill="#000" lengthAdjust="spacingAndGlyphs" textLength="16" >Del.</text><rect x="681.5" y="510.5" width="50.8" height="19" fill="#f0f0f0" stroke="#b8b8b8" stroke-width="1" rx="2.5" /><text x="684.6" y="523.6" font-size="10" fill="#8a8a8a" letter-spacing="-0.2" >7017</text><rect x="738.8" y="510.5" width="27.5" height="19" fill="#f0f0f0" stroke="#b8b8b8" stroke-width="1" rx="2.5" /><text x="741.9" y="523.6" font-size="10" fill="#8a8a8a" letter-spacing="-0.2" >AI</text><rect x="766.8" y="510.5" width="28" height="19" fill="#f0f0f0" stroke="#b8b8b8" stroke-width="1" rx="2.5" /><text x="769.9" y="523.6" font-size="10" fill="#8a8a8a" letter-spacing="-0.2" >4</text><rect x="810.5" y="510.5" width="94" height="19" fill="#f0f0f0" stroke="#b8b8b8" stroke-width="1" rx="2.5" /><text x="813.6" y="523.6" font-size="10" fill="#8a8a8a" lengthAdjust="spacingAndGlyphs" textLength="47" >1 7017 AI 4</text><rect x="915.8" y="510.5" width="93.8" height="19" fill="url(#qbtn)" stroke="#c4c4c4" stroke-width="1" rx="2.5" /><path d="M996.7 518.6 h5.6 l-2.8 2.8 Z" fill="#909090"/><rect x="1016.3" y="510.5" width="19" height="19" fill="url(#qbtn)" stroke="#c0c0c0" stroke-width="1" rx="2.5" /><text x="1025.8" y="523.6" font-size="10" fill="#000" text-anchor="middle" letter-spacing="-0.2" >...</text><rect x="1049.5" y="510.5" width="55.5" height="19" fill="url(#qbtn)" stroke="#c4c4c4" stroke-width="1" rx="2.5" /><text x="1053.5" y="523.6" font-size="10" fill="#909090" letter-spacing="-0.3" >400</text><path d="M1092.2 518.6 h5.6 l-2.8 2.8 Z" fill="#909090"/><text x="1111" y="524.2" font-size="10" fill="#000" lengthAdjust="spacingAndGlyphs" textLength="11.5" >ms</text><rect x="1139.5" y="510.5" width="59" height="19" fill="#f0f0f0" stroke="#b8b8b8" stroke-width="1" rx="2.5" /><rect x="569.5" y="542.95" width="12" height="12" fill="#fdfdfd" stroke="#b4b4b4" stroke-width="1" rx="1.5" /><path d="M572.2 549.05 l2.3 3.4 l4 -7.6" fill="none" stroke="#101010" stroke-width="1.7" stroke-linecap="round" stroke-linejoin="round"/><text x="587.5" y="552.95" font-size="10" fill="#000" lengthAdjust="spacingAndGlyphs" textLength="24" >Enab.</text><rect x="633.8" y="539.25" width="36.5" height="19" fill="url(#qbtn)" stroke="#b0b0b0" stroke-width="1" rx="2.5" /><text x="644.05" y="552.35" font-size="10" fill="#000" lengthAdjust="spacingAndGlyphs" textLength="16" >Del.</text><rect x="681.5" y="539.25" width="50.8" height="19" fill="#f0f0f0" stroke="#b8b8b8" stroke-width="1" rx="2.5" /><text x="684.6" y="552.35" font-size="10" fill="#8a8a8a" letter-spacing="-0.2" >7017</text><rect x="738.8" y="539.25" width="27.5" height="19" fill="#f0f0f0" stroke="#b8b8b8" stroke-width="1" rx="2.5" /><text x="741.9" y="552.35" font-size="10" fill="#8a8a8a" letter-spacing="-0.2" >AI</text><rect x="766.8" y="539.25" width="28" height="19" fill="#f0f0f0" stroke="#b8b8b8" stroke-width="1" rx="2.5" /><text x="769.9" y="552.35" font-size="10" fill="#8a8a8a" letter-spacing="-0.2" >7</text><rect x="810.5" y="539.25" width="94" height="19" fill="#f0f0f0" stroke="#b8b8b8" stroke-width="1" rx="2.5" /><text x="813.6" y="552.35" font-size="10" fill="#8a8a8a" lengthAdjust="spacingAndGlyphs" textLength="47" >1 7017 AI 7</text><rect x="915.8" y="539.25" width="93.8" height="19" fill="url(#qbtn)" stroke="#c4c4c4" stroke-width="1" rx="2.5" /><path d="M996.7 547.35 h5.6 l-2.8 2.8 Z" fill="#909090"/><rect x="1016.3" y="539.25" width="19" height="19" fill="url(#qbtn)" stroke="#c0c0c0" stroke-width="1" rx="2.5" /><text x="1025.8" y="552.35" font-size="10" fill="#000" text-anchor="middle" letter-spacing="-0.2" >...</text><rect x="1049.5" y="539.25" width="55.5" height="19" fill="url(#qbtn)" stroke="#c4c4c4" stroke-width="1" rx="2.5" /><text x="1053.5" y="552.35" font-size="10" fill="#909090" letter-spacing="-0.3" >400</text><path d="M1092.2 547.35 h5.6 l-2.8 2.8 Z" fill="#909090"/><text x="1111" y="552.95" font-size="10" fill="#000" lengthAdjust="spacingAndGlyphs" textLength="11.5" >ms</text><rect x="1139.5" y="539.25" width="59" height="19" fill="#f0f0f0" stroke="#b8b8b8" stroke-width="1" rx="2.5" /><rect x="940" y="738" width="340" height="6" fill="#e4e4e4" /><rect x="940" y="746" width="340" height="100" fill="#000" /><rect x="940" y="846" width="340" height="72" fill="#f0f0f0" /><rect x="987.5" y="849.5" width="59" height="19" fill="url(#qbtn)" stroke="#b0b0b0" stroke-width="1" rx="2.5" /><rect x="940" y="888" width="333" height="1" fill="#dcdcdc" /><rect x="940" y="899" width="333" height="1" fill="#dcdcdc" /><rect x="940" y="918" width="333" height="1" fill="#b0b0b0" /><rect x="940" y="919" width="333" height="246" fill="#ffffff" /><rect x="321" y="1164" width="1147" height="9" fill="#cfcfcf" /><rect x="321" y="1164" width="1147" height="1" fill="#b0b0b0" /><rect x="321" y="1171" width="1147" height="1" fill="#bcbcbc" /><text x="14.6" y="1189" font-size="11" fill="#000" textLength="54.9" >Page 1 of 1</text><text x="81.5" y="1189" font-size="11" fill="#000" textLength="43.5" >Words: 0</text><text x="134" y="1189" font-size="11" fill="#000" textLength="77.4" >Badly spelled: 0</text></g>
<g id="p_code"><rect x="1153" y="201.5" width="861" height="502.5" fill="#000" opacity="0.5" filter="url(#shadow)"/><rect x="1153" y="197.5" width="861" height="502.5" fill="#f0f0f0" /><rect x="1153" y="197.5" width="861" height="28.8" fill="#ffffff" /><rect x="1153.5" y="198" width="860" height="501.5" fill="none" stroke="#a8a8a8" stroke-width="1" /><rect x="1160.8" y="203.8" width="15" height="15" fill="#0a7cff" /><text x="1168.3" y="214" font-size="7.8" fill="#e8f2ff" text-anchor="middle" letter-spacing="-0.3" font-weight="400">MD</text><text x="1181" y="215.8" font-size="12" fill="#999" lengthAdjust="spacingAndGlyphs" textLength="65.5" >SCADA Code</text><rect x="1899.3" y="211.3" width="10" height="1" fill="#9a9a9a" /><rect x="1943.3" y="206.8" width="9" height="9" fill="none" stroke="#9a9a9a" stroke-width="1" /><path d="M1986.5 206.3 l10 10 M1996.5 206.3 l-10 10" stroke="#9a9a9a" stroke-width="1.1" fill="none"/><rect x="1164.5" y="238.3" width="52" height="24.4" fill="#c2c2c2" /><text x="1173.5" y="255" font-size="12" fill="#9a9a9a" >&lt;</text><text x="1198.5" y="255" font-size="12" fill="#9a9a9a" >&gt;</text><rect x="1217" y="238.8" width="771" height="23.4" fill="#fdfdfd" stroke="#a8a8a8" stroke-width="1" /><rect x="1164.5" y="262.6" width="824" height="440" fill="#272a38" /><rect x="1164.5" y="262.6" width="49.5" height="440" fill="#404040" /><rect x="1199.3" y="267" width="1.1" height="436" fill="#d80000" /><rect x="1219" y="267.6" width="751.5" height="16.6" fill="#3a3d50" /><rect x="1989" y="238.3" width="13.3" height="464" fill="#ffffff" /><rect x="1989.5" y="238.8" width="12.3" height="12" fill="#f4f4f4" stroke="#dcdcdc" stroke-width="1" /><path d="M1992.4 246.3 L1995.6 242.6 L1998.8 246.3 Z" fill="#505050"/><rect x="2002.3" y="251" width="1" height="451" fill="#c8c8c8" /><text x="1196.5" y="280.9" font-size="14" fill="#ffffff" text-anchor="end" font-weight="bold" >1</text><text x="1219" y="280.9" font-size="14" xml:space="preserve" textLength="415.6"><tspan fill="#ffff00" font-weight="bold">//variable dt (delta time from start) is predefined in loop scope</tspan></text><text x="1196.5" y="297.5" font-size="14" fill="#cfcfcf" text-anchor="end" >2</text><text x="1196.5" y="314.1" font-size="14" fill="#cfcfcf" text-anchor="end" >3</text><text x="1219" y="314.1" font-size="14" xml:space="preserve"><tspan fill="#ffff00" font-weight="bold">#once</tspan></text><text x="1196.5" y="330.7" font-size="14" fill="#cfcfcf" text-anchor="end" >4</text><text x="1196.5" y="347.3" font-size="14" fill="#cfcfcf" text-anchor="end" >5</text><text x="1219" y="347.3" font-size="14" xml:space="preserve"><tspan fill="#ffff00" font-weight="bold">#loop</tspan></text><text x="1196.5" y="363.9" font-size="14" fill="#cfcfcf" text-anchor="end" >6</text><text x="1219" y="363.9" font-size="14" xml:space="preserve"><tspan fill="#e6e6e6">tg_DO1 </tspan><tspan fill="#ff8000">= </tspan><tspan fill="#e6e6e6">tg_Gen1</tspan></text><text x="1196.5" y="380.5" font-size="14" fill="#cfcfcf" text-anchor="end" >7</text><text x="1219" y="380.5" font-size="14" xml:space="preserve"><tspan fill="#e6e6e6">tg_topTank </tspan><tspan fill="#ff8000">= </tspan><tspan fill="#e6e6e6">tg_Gen1</tspan></text><text x="1196.5" y="397.1" font-size="14" fill="#cfcfcf" text-anchor="end" >8</text><text x="1219" y="397.1" font-size="14" xml:space="preserve"><tspan fill="#e6e6e6">tg_current </tspan><tspan fill="#ff8000">= </tspan><tspan fill="#e6e6e6">tg_Gen4</tspan></text><text x="1196.5" y="413.7" font-size="14" fill="#cfcfcf" text-anchor="end" >9</text><text x="1219" y="413.7" font-size="14" xml:space="preserve"><tspan fill="#e6e6e6">tg_midTank </tspan><tspan fill="#ff8000">= </tspan><tspan fill="#e6e6e6">tg_Gen3</tspan></text><text x="1196.5" y="430.3" font-size="14" fill="#cfcfcf" text-anchor="end" >10</text><text x="1219" y="430.3" font-size="14" xml:space="preserve"><tspan fill="#e6e6e6">tg_tag2 </tspan><tspan fill="#ff8000">= </tspan><tspan fill="#e6e6e6">tg_midTank</tspan></text><text x="1196.5" y="446.9" font-size="14" fill="#cfcfcf" text-anchor="end" >11</text><text x="1219" y="446.9" font-size="14" xml:space="preserve"><tspan fill="#e6e6e6">tg_redTank </tspan><tspan fill="#ff8000">= </tspan><tspan fill="#b48cff">100 </tspan><tspan fill="#ff8000">- </tspan><tspan fill="#e6e6e6">tg_midTank</tspan></text><text x="1196.5" y="463.5" font-size="14" fill="#cfcfcf" text-anchor="end" >12</text><text x="1219" y="463.5" font-size="14" xml:space="preserve"><tspan fill="#e6e6e6">tg_t </tspan><tspan fill="#ff8000">= </tspan><tspan fill="#e6e6e6">tg_topTank </tspan><tspan fill="#ff8000">/ </tspan><tspan fill="#b48cff">2</tspan></text><text x="1196.5" y="480.1" font-size="14" fill="#cfcfcf" text-anchor="end" >13</text><text x="1219" y="480.1" font-size="14" xml:space="preserve"><tspan fill="#e6e6e6">tg_t1 </tspan><tspan fill="#ff8000">= </tspan><tspan fill="#e6e6e6">tg_midTank </tspan><tspan fill="#ff8000">/ </tspan><tspan fill="#b48cff">2</tspan></text><text x="1196.5" y="496.7" font-size="14" fill="#cfcfcf" text-anchor="end" >14</text><text x="1196.5" y="513.3" font-size="14" fill="#cfcfcf" text-anchor="end" >15</text><text x="1219" y="513.3" font-size="14" xml:space="preserve"><tspan fill="#3355ff" font-weight="bold">if </tspan><tspan fill="#ff8000" font-weight="bold">(</tspan><tspan fill="#e6e6e6">tg_1_7017_AI_2 </tspan><tspan fill="#ff8000">&gt; </tspan><tspan fill="#b48cff">70</tspan><tspan fill="#ff8000" font-weight="bold">)</tspan></text><path d="M1205.4 511.8 l5.4 0 l0 -5.4 Z" fill="#222"/><text x="1196.5" y="529.9" font-size="14" fill="#cfcfcf" text-anchor="end" >16</text><text x="1219" y="529.9" font-size="14" xml:space="preserve"><tspan fill="#ff8000" font-weight="bold">{</tspan></text><text x="1196.5" y="546.5" font-size="14" fill="#cfcfcf" text-anchor="end" >17</text><text x="1219" y="546.5" font-size="14" xml:space="preserve"><tspan fill="#e6e6e6">    tg_AI2 </tspan><tspan fill="#ff8000">= </tspan><tspan fill="#b48cff">1</tspan></text><text x="1196.5" y="563.1" font-size="14" fill="#cfcfcf" text-anchor="end" >18</text><text x="1219" y="563.1" font-size="14" xml:space="preserve"><tspan fill="#ff8000" font-weight="bold">}</tspan></text><text x="1196.5" y="579.7" font-size="14" fill="#cfcfcf" text-anchor="end" >19</text><text x="1219" y="579.7" font-size="14" xml:space="preserve"><tspan fill="#3355ff" font-weight="bold">else</tspan></text><path d="M1205.4 578.2 l5.4 0 l0 -5.4 Z" fill="#222"/><text x="1196.5" y="596.3" font-size="14" fill="#cfcfcf" text-anchor="end" >20</text><text x="1219" y="596.3" font-size="14" xml:space="preserve"><tspan fill="#ff8000" font-weight="bold">{</tspan></text><text x="1196.5" y="612.9" font-size="14" fill="#cfcfcf" text-anchor="end" >21</text><text x="1219" y="612.9" font-size="14" xml:space="preserve"><tspan fill="#e6e6e6">    tg_AI2 </tspan><tspan fill="#ff8000">= </tspan><tspan fill="#b48cff">0</tspan></text><text x="1196.5" y="629.5" font-size="14" fill="#cfcfcf" text-anchor="end" >22</text><text x="1219" y="629.5" font-size="14" xml:space="preserve"><tspan fill="#ff8000" font-weight="bold">}</tspan></text></g>
<g id="p_scada"><rect x="274.3" y="561.2" width="690.7" height="735.4" fill="#000" opacity="0.55" filter="url(#shadow)"/><rect x="274.3" y="557.2" width="690.7" height="735.4" fill="#f0f0f0" /><rect x="274.3" y="557.2" width="690.7" height="28.7" fill="#ffffff" /><rect x="274.8" y="557.7" width="689.7" height="734.4" fill="none" stroke="#8a8a8a" stroke-width="1" opacity="0.55"/><rect x="282" y="562.8" width="15.4" height="15.4" fill="#0a7cff" /><text x="289.7" y="573.27" font-size="8.01" fill="#e8f2ff" text-anchor="middle" letter-spacing="-0.3" font-weight="400">MD</text><text x="302.5" y="575.6" font-size="12" fill="#000" lengthAdjust="spacingAndGlyphs" textLength="35.9" >SCADA</text><rect x="850.8" y="570.8" width="10" height="1" fill="#000" /><rect x="894.3" y="566.3" width="9" height="9" fill="none" stroke="#000" stroke-width="1" /><path d="M937.5 565.8 l10 10 M947.5 565.8 l-10 10" stroke="#000" stroke-width="1.1" fill="none"/><path d="M799 582.5 v15.5 l3.6 -3.4 l2.9 6.3 l2.2 -1 l-2.8 -6.2 h4.9 Z" fill="#fff" stroke="#000" stroke-width="1" stroke-linejoin="round"/><text x="285.9" y="608.6" font-size="12" fill="#000" textLength="67" >Tag Manager</text><rect x="286.7" y="614.5" width="666.6" height="96.4" fill="none" stroke="#dcdcdc" stroke-width="1" rx="1.5" /><text x="294.4" y="640" font-size="12" fill="#000" lengthAdjust="spacingAndGlyphs" textLength="72.6" >PC IP Address</text><text x="399.4" y="640" font-size="12" fill="#000" textLength="22.4" >Port</text><rect x="295.1" y="645.2" width="75" height="19" fill="#fff" stroke="#3f8df2" stroke-width="1.4" rx="2.5" /><text x="297.7" y="659.4" font-size="12" fill="#000" textLength="50.6" >127.0.0.1</text><rect x="390.6" y="646.2" width="65.5" height="17" fill="#fff" stroke="#b8b8b8" stroke-width="1" rx="2.5" /><rect x="443.1" y="646.7" width="1" height="16" fill="#c8c8c8" /><path d="M447.35 652.86 h5.6 l-2.8 -2.8 Z" fill="#555"/><path d="M447.35 656.9 h5.6 l-2.8 2.8 Z" fill="#555"/><text x="395.1" y="659.02" font-size="12" fill="#000" textLength="25.6" >1501</text><rect x="467" y="645" width="142.3" height="19" fill="url(#qbtn)" stroke="#b0b0b0" stroke-width="1" rx="2.5" /><text x="483.75" y="658.82" font-size="12" fill="#000" textLength="108.8" >Import Channel Tags</text><rect x="639.5" y="645" width="142" height="19" fill="url(#qbtn)" stroke="#b0b0b0" stroke-width="1" rx="2.5" /><text x="657" y="658.82" font-size="12" fill="#000" textLength="107" >Add Instrument Tag</text><rect x="792" y="645" width="142.5" height="19" fill="url(#qbtn)" stroke="#b0b0b0" stroke-width="1" rx="2.5" /><text x="823.5" y="658.82" font-size="12" fill="#000" textLength="79.5" >Delete All Tags</text><rect x="639.5" y="673.8" width="142" height="19.4" fill="url(#qbtn)" stroke="#b0b0b0" stroke-width="1" rx="2.5" /><text x="671.1" y="687.82" font-size="12" fill="#000" textLength="78.8" >Enable All Tags</text><rect x="792" y="673.8" width="142.5" height="19.4" fill="url(#qbtn)" stroke="#b0b0b0" stroke-width="1" rx="2.5" /><text x="823.5" y="687.82" font-size="12" fill="#000" textLength="79.5" >Disable All Tags</text><text x="285.9" y="730" font-size="12" fill="#000" textLength="24.3" >Tags</text><rect x="286.7" y="735.9" width="666.6" height="443.8" fill="none" stroke="#dcdcdc" stroke-width="1" rx="1.5" /><text x="402.5" y="759.9" font-size="10" fill="#000" textLength="47" >Instrument</text><text x="541.3" y="759.9" font-size="10" fill="#000" textLength="16.1" >Tag</text><text x="672" y="759.9" font-size="10" fill="#000" textLength="35.8" >Channel</text><rect x="296.5" y="773.5" width="645.6" height="395.5" fill="#f0f0f0" stroke="#cfcfcf" stroke-width="1" /><g clip-path="url(#tagclip)"><rect x="299.2" y="778" width="609" height="128" fill="#f0f0f0" stroke="#dcdcdc" stroke-width="1" /><text x="307.5" y="795" font-size="12" fill="#000" >1</text><rect x="403" y="788.75" width="132.3" height="19" fill="url(#qbtn)" stroke="#b0b0b0" stroke-width="1" rx="2.5" /><text x="407.5" y="803.25" font-size="12" fill="#000" textLength="80" >analog circular</text><path d="M522.3 796.5 h6 l-3 3 Z" fill="#444"/><rect x="307.5" y="812" width="12" height="12" fill="#fdfdfd" stroke="#b4b4b4" stroke-width="1" rx="1.5" /><path d="M310.2 818.1 l2.3 3.4 l4 -7.6" fill="none" stroke="#101010" stroke-width="1.7" stroke-linecap="round" stroke-linejoin="round"/><text x="325" y="822" font-size="12" fill="#000" textLength="61.3" >Enable Tag</text><rect x="308" y="836.25" width="94" height="19" fill="url(#qbtn)" stroke="#b0b0b0" stroke-width="1" rx="2.5" /><text x="325.35" y="850.07" font-size="12" fill="#000" textLength="59.3" >Delete Tag</text><rect x="308" y="865" width="94" height="19" fill="url(#qbtn)" stroke="#c8c8c8" stroke-width="1" rx="2.5" /><text x="312" y="879.5" font-size="12" fill="#a4a4a4" textLength="43.5" >Channel</text><path d="M388.5 873.1 h5.6 l-2.8 2.8 Z" fill="#a0a0a0"/><text x="422" y="874.25" font-size="10" fill="#000" textLength="55.5" >Tag Variable:</text><text x="422" y="893" font-size="10" fill="#000" textLength="64.3" >Event Variable:</text><text x="546.5" y="798" font-size="10" fill="#000" textLength="12.5" >&lt;&lt;</text><text x="728.3" y="798" font-size="10" fill="#000" textLength="12" >&lt;&lt;</text><rect x="575" y="788.75" width="142.3" height="19" fill="#f0f0f0" stroke="#b8b8b8" stroke-width="1" rx="2.5" /><text x="577.5" y="802.57" font-size="12" fill="#909090" textLength="63.3" >1 7017 AI 2</text><rect x="756.8" y="788.75" width="142.7" height="19" fill="#f0f0f0" stroke="#b8b8b8" stroke-width="1" rx="2.5" /><text x="759.5" y="802.57" font-size="12" fill="#909090" textLength="62.5" >1 7017 AI 2</text><text x="536.3" y="826.25" font-size="10" fill="#000" textLength="36.5" >Send To</text><rect x="594.5" y="812.25" width="122.8" height="19.7" fill="#f0f0f0" stroke="#b8b8b8" stroke-width="1" rx="2.5" /><rect x="756.8" y="817.25" width="84.7" height="19" fill="#f0f0f0" stroke="#b8b8b8" stroke-width="1" rx="2.5" /><text x="759.5" y="831.07" font-size="12" fill="#909090" textLength="50.8" >127.0.0.1</text><rect x="852.5" y="817.25" width="47" height="19" fill="#f0f0f0" stroke="#b8b8b8" stroke-width="1" rx="2.5" /><text x="855.2" y="831.07" font-size="12" fill="#909090" textLength="26" >1806</text><rect x="517.8" y="840.3" width="12" height="12" fill="#fdfdfd" stroke="#b4b4b4" stroke-width="1" rx="1.5" /><text x="535.8" y="851.25" font-size="12" fill="#000" textLength="18.7" >Min</text><rect x="565.8" y="837.25" width="55.7" height="17.4" fill="#f0f0f0" stroke="#b8b8b8" stroke-width="1" rx="2.5" /><rect x="608.3" y="837.75" width="1" height="16.4" fill="#c8c8c8" /><path d="M612.65 844.04 h5.6 l-2.8 -2.8 Z" fill="#909090"/><path d="M612.65 848.23 h5.6 l-2.8 2.8 Z" fill="#909090"/><text x="570.3" y="850.27" font-size="12" fill="#a0a0a0" >0</text><rect x="632.5" y="840.3" width="12" height="12" fill="#fdfdfd" stroke="#b4b4b4" stroke-width="1" rx="1.5" /><text x="650.3" y="851.25" font-size="12" fill="#000" textLength="22.2" >Max</text><rect x="680.5" y="837.25" width="65.5" height="17.4" fill="#f0f0f0" stroke="#b8b8b8" stroke-width="1" rx="2.5" /><rect x="732.5" y="837.75" width="1" height="16.4" fill="#c8c8c8" /><path d="M737 844.04 h5.6 l-2.8 -2.8 Z" fill="#909090"/><path d="M737 848.23 h5.6 l-2.8 2.8 Z" fill="#909090"/><text x="685" y="850.27" font-size="12" fill="#a0a0a0" >10</text><text x="517" y="868.75" font-size="10" fill="#000" lengthAdjust="spacingAndGlyphs" textLength="67.5" >tg_1_7017_AI_2</text><text x="632" y="868.75" font-size="10" fill="#000" lengthAdjust="spacingAndGlyphs" textLength="14.5" >199</text><text x="517" y="888" font-size="10" fill="#000" lengthAdjust="spacingAndGlyphs" textLength="72" >tg_e1_7017_AI_2</text><text x="632" y="888" font-size="10" fill="#000" >0</text><rect x="756.8" y="851.25" width="142.7" height="18.8" fill="#f0f0f0" stroke="#b8b8b8" stroke-width="1" rx="2.5" /><rect x="756.8" y="877.5" width="142.7" height="19" fill="#f0f0f0" stroke="#b8b8b8" stroke-width="1" rx="2.5" /><rect x="299.2" y="912" width="609" height="128" fill="#f0f0f0" stroke="#dcdcdc" stroke-width="1" /><text x="307.5" y="929" font-size="12" fill="#000" >2</text><rect x="403" y="922.75" width="132.3" height="19" fill="url(#qbtn)" stroke="#b0b0b0" stroke-width="1" rx="2.5" /><text x="407.5" y="937.25" font-size="12" fill="#000" textLength="80" >analog circular</text><path d="M522.3 930.5 h6 l-3 3 Z" fill="#444"/><rect x="307.5" y="946" width="12" height="12" fill="#fdfdfd" stroke="#b4b4b4" stroke-width="1" rx="1.5" /><path d="M310.2 952.1 l2.3 3.4 l4 -7.6" fill="none" stroke="#101010" stroke-width="1.7" stroke-linecap="round" stroke-linejoin="round"/><text x="325" y="956" font-size="12" fill="#000" textLength="61.3" >Enable Tag</text><rect x="308" y="970.25" width="94" height="19" fill="url(#qbtn)" stroke="#b0b0b0" stroke-width="1" rx="2.5" /><text x="325.35" y="984.07" font-size="12" fill="#000" textLength="59.3" >Delete Tag</text><rect x="308" y="999" width="94" height="19" fill="url(#qbtn)" stroke="#c8c8c8" stroke-width="1" rx="2.5" /><text x="312" y="1013.5" font-size="12" fill="#a4a4a4" textLength="43.5" >Channel</text><path d="M388.5 1007.1 h5.6 l-2.8 2.8 Z" fill="#a0a0a0"/><text x="422" y="1008.25" font-size="10" fill="#000" textLength="55.5" >Tag Variable:</text><text x="422" y="1027" font-size="10" fill="#000" textLength="64.3" >Event Variable:</text><text x="546.5" y="932" font-size="10" fill="#000" textLength="12.5" >&lt;&lt;</text><text x="728.3" y="932" font-size="10" fill="#000" textLength="12" >&lt;&lt;</text><rect x="575" y="922.75" width="142.3" height="19" fill="#f0f0f0" stroke="#b8b8b8" stroke-width="1" rx="2.5" /><text x="577.5" y="936.57" font-size="12" fill="#909090" textLength="63.3" >1 7017 AI 4</text><rect x="756.8" y="922.75" width="142.7" height="19" fill="#f0f0f0" stroke="#b8b8b8" stroke-width="1" rx="2.5" /><text x="759.5" y="936.57" font-size="12" fill="#909090" textLength="62.5" >1 7017 AI 4</text><text x="536.3" y="960.25" font-size="10" fill="#000" textLength="36.5" >Send To</text><rect x="594.5" y="946.25" width="122.8" height="19.7" fill="#f0f0f0" stroke="#b8b8b8" stroke-width="1" rx="2.5" /><rect x="756.8" y="951.25" width="84.7" height="19" fill="#f0f0f0" stroke="#b8b8b8" stroke-width="1" rx="2.5" /><text x="759.5" y="965.07" font-size="12" fill="#909090" textLength="50.8" >127.0.0.1</text><rect x="852.5" y="951.25" width="47" height="19" fill="#f0f0f0" stroke="#b8b8b8" stroke-width="1" rx="2.5" /><text x="855.2" y="965.07" font-size="12" fill="#909090" textLength="26" >1807</text><rect x="517.8" y="974.3" width="12" height="12" fill="#fdfdfd" stroke="#b4b4b4" stroke-width="1" rx="1.5" /><text x="535.8" y="985.25" font-size="12" fill="#000" textLength="18.7" >Min</text><rect x="565.8" y="971.25" width="55.7" height="17.4" fill="#f0f0f0" stroke="#b8b8b8" stroke-width="1" rx="2.5" /><rect x="608.3" y="971.75" width="1" height="16.4" fill="#c8c8c8" /><path d="M612.65 978.04 h5.6 l-2.8 -2.8 Z" fill="#909090"/><path d="M612.65 982.23 h5.6 l-2.8 2.8 Z" fill="#909090"/><text x="570.3" y="984.27" font-size="12" fill="#a0a0a0" >0</text><rect x="632.5" y="974.3" width="12" height="12" fill="#fdfdfd" stroke="#b4b4b4" stroke-width="1" rx="1.5" /><text x="650.3" y="985.25" font-size="12" fill="#000" textLength="22.2" >Max</text><rect x="680.5" y="971.25" width="65.5" height="17.4" fill="#f0f0f0" stroke="#b8b8b8" stroke-width="1" rx="2.5" /><rect x="732.5" y="971.75" width="1" height="16.4" fill="#c8c8c8" /><path d="M737 978.04 h5.6 l-2.8 -2.8 Z" fill="#909090"/><path d="M737 982.23 h5.6 l-2.8 2.8 Z" fill="#909090"/><text x="685" y="984.27" font-size="12" fill="#a0a0a0" >10</text><text x="517" y="1002.75" font-size="10" fill="#000" lengthAdjust="spacingAndGlyphs" textLength="67.5" >tg_1_7017_AI_4</text><text x="632" y="1002.75" font-size="10" fill="#000" lengthAdjust="spacingAndGlyphs" textLength="14.5" >199</text><text x="517" y="1022" font-size="10" fill="#000" lengthAdjust="spacingAndGlyphs" textLength="72" >tg_e1_7017_AI_4</text><text x="632" y="1022" font-size="10" fill="#000" >0</text><rect x="756.8" y="985.25" width="142.7" height="18.8" fill="#f0f0f0" stroke="#b8b8b8" stroke-width="1" rx="2.5" /><rect x="756.8" y="1011.5" width="142.7" height="19" fill="#f0f0f0" stroke="#b8b8b8" stroke-width="1" rx="2.5" /><rect x="299.2" y="1046" width="609" height="128" fill="#f0f0f0" stroke="#dcdcdc" stroke-width="1" /><text x="307.5" y="1063" font-size="12" fill="#000" >3</text><rect x="403" y="1056.75" width="132.3" height="19" fill="url(#qbtn)" stroke="#b0b0b0" stroke-width="1" rx="2.5" /><text x="407.5" y="1071.25" font-size="12" fill="#000" textLength="80" >analog circular</text><path d="M522.3 1064.5 h6 l-3 3 Z" fill="#444"/><rect x="307.5" y="1080" width="12" height="12" fill="#fdfdfd" stroke="#b4b4b4" stroke-width="1" rx="1.5" /><path d="M310.2 1086.1 l2.3 3.4 l4 -7.6" fill="none" stroke="#101010" stroke-width="1.7" stroke-linecap="round" stroke-linejoin="round"/><text x="325" y="1090" font-size="12" fill="#000" textLength="61.3" >Enable Tag</text><rect x="308" y="1104.25" width="94" height="19" fill="url(#qbtn)" stroke="#b0b0b0" stroke-width="1" rx="2.5" /><text x="325.35" y="1118.07" font-size="12" fill="#000" textLength="59.3" >Delete Tag</text><rect x="308" y="1133" width="94" height="19" fill="url(#qbtn)" stroke="#c8c8c8" stroke-width="1" rx="2.5" /><text x="312" y="1147.5" font-size="12" fill="#a4a4a4" textLength="43.5" >Channel</text><path d="M388.5 1141.1 h5.6 l-2.8 2.8 Z" fill="#a0a0a0"/><text x="422" y="1142.25" font-size="10" fill="#000" textLength="55.5" >Tag Variable:</text><text x="422" y="1161" font-size="10" fill="#000" textLength="64.3" >Event Variable:</text><text x="546.5" y="1066" font-size="10" fill="#000" textLength="12.5" >&lt;&lt;</text><text x="728.3" y="1066" font-size="10" fill="#000" textLength="12" >&lt;&lt;</text><rect x="575" y="1056.75" width="142.3" height="19" fill="#f0f0f0" stroke="#b8b8b8" stroke-width="1" rx="2.5" /><text x="577.5" y="1070.57" font-size="12" fill="#909090" textLength="63.3" >1 7017 AI 7</text><rect x="756.8" y="1056.75" width="142.7" height="19" fill="#f0f0f0" stroke="#b8b8b8" stroke-width="1" rx="2.5" /><text x="759.5" y="1070.57" font-size="12" fill="#909090" textLength="62.5" >1 7017 AI 7</text><text x="536.3" y="1094.25" font-size="10" fill="#000" textLength="36.5" >Send To</text><rect x="594.5" y="1080.25" width="122.8" height="19.7" fill="#f0f0f0" stroke="#b8b8b8" stroke-width="1" rx="2.5" /><rect x="756.8" y="1085.25" width="84.7" height="19" fill="#f0f0f0" stroke="#b8b8b8" stroke-width="1" rx="2.5" /><text x="759.5" y="1099.07" font-size="12" fill="#909090" textLength="50.8" >127.0.0.1</text><rect x="852.5" y="1085.25" width="47" height="19" fill="#f0f0f0" stroke="#b8b8b8" stroke-width="1" rx="2.5" /><text x="855.2" y="1099.07" font-size="12" fill="#909090" textLength="26" >1808</text><rect x="517.8" y="1108.3" width="12" height="12" fill="#fdfdfd" stroke="#b4b4b4" stroke-width="1" rx="1.5" /><text x="535.8" y="1119.25" font-size="12" fill="#000" textLength="18.7" >Min</text><rect x="565.8" y="1105.25" width="55.7" height="17.4" fill="#f0f0f0" stroke="#b8b8b8" stroke-width="1" rx="2.5" /><rect x="608.3" y="1105.75" width="1" height="16.4" fill="#c8c8c8" /><path d="M612.65 1112.04 h5.6 l-2.8 -2.8 Z" fill="#909090"/><path d="M612.65 1116.23 h5.6 l-2.8 2.8 Z" fill="#909090"/><text x="570.3" y="1118.27" font-size="12" fill="#a0a0a0" >0</text><rect x="632.5" y="1108.3" width="12" height="12" fill="#fdfdfd" stroke="#b4b4b4" stroke-width="1" rx="1.5" /><text x="650.3" y="1119.25" font-size="12" fill="#000" textLength="22.2" >Max</text><rect x="680.5" y="1105.25" width="65.5" height="17.4" fill="#f0f0f0" stroke="#b8b8b8" stroke-width="1" rx="2.5" /><rect x="732.5" y="1105.75" width="1" height="16.4" fill="#c8c8c8" /><path d="M737 1112.04 h5.6 l-2.8 -2.8 Z" fill="#909090"/><path d="M737 1116.23 h5.6 l-2.8 2.8 Z" fill="#909090"/><text x="685" y="1118.27" font-size="12" fill="#a0a0a0" >10</text><text x="517" y="1136.75" font-size="10" fill="#000" lengthAdjust="spacingAndGlyphs" textLength="67.5" >tg_1_7017_AI_7</text><text x="632" y="1136.75" font-size="10" fill="#000" lengthAdjust="spacingAndGlyphs" textLength="14.5" >199</text><text x="517" y="1156" font-size="10" fill="#000" lengthAdjust="spacingAndGlyphs" textLength="72" >tg_e1_7017_AI_7</text><text x="632" y="1156" font-size="10" fill="#000" >0</text><rect x="756.8" y="1119.25" width="142.7" height="18.8" fill="#f0f0f0" stroke="#b8b8b8" stroke-width="1" rx="2.5" /><rect x="756.8" y="1145.5" width="142.7" height="19" fill="#f0f0f0" stroke="#b8b8b8" stroke-width="1" rx="2.5" /></g><rect x="929" y="774" width="12.6" height="394.5" fill="#e2e2e2" /><rect x="929" y="774" width="1" height="394.5" fill="#d4d4d4" /><rect x="929.5" y="774" width="12" height="13" fill="#f6f6f6" /><path d="M932.6 781.7 h6 l-3 -3 Z" fill="#505050"/><rect x="930.5" y="788" width="10.5" height="57.5" fill="#fbfbfb" stroke="#cdcdcd" stroke-width="1" /><rect x="929.5" y="1155.5" width="12" height="13" fill="#f6f6f6" /><path d="M932.6 1160.3 h6 l-3 3 Z" fill="#505050"/><text x="285.5" y="1199.5" font-size="12" fill="#000" lengthAdjust="spacingAndGlyphs" textLength="35.3" >SCADA</text><rect x="286.7" y="1206" width="666.6" height="75.6" fill="none" stroke="#dcdcdc" stroke-width="1" rx="1.5" /><circle cx="328" cy="1239.5" r="11.6" fill="#a9a9a9"/><path d="M324.3 1233.3 L334.8 1239.5 L324.3 1245.7 Z" fill="#fff"/><text x="315" y="1266.3" font-size="12" fill="#a4a4a4" textLength="25" >Start</text><circle cx="375.6" cy="1239.5" r="11.6" fill="#0a7cff"/><rect x="370.6" y="1234.5" width="10" height="10" fill="#fff" rx="1" /><text x="363.8" y="1266.3" font-size="12" fill="#000" textLength="23.7" >Stop</text><text x="409.3" y="1240" font-size="10" fill="#000" lengthAdjust="spacingAndGlyphs" textLength="45.7" >Script Rate</text><rect x="409.8" y="1256.3" width="56" height="17" fill="#fff" stroke="#b8b8b8" stroke-width="1" rx="2.5" /><rect x="452.5" y="1256.8" width="1" height="16" fill="#c8c8c8" /><path d="M456.9 1262.96 h5.6 l-2.8 -2.8 Z" fill="#555"/><path d="M456.9 1267 h5.6 l-2.8 2.8 Z" fill="#555"/><text x="414.3" y="1269.12" font-size="12" fill="#000" lengthAdjust="spacingAndGlyphs" textLength="18.8" >100</text><text x="476.3" y="1268.8" font-size="10" fill="#000" lengthAdjust="spacingAndGlyphs" textLength="11.2" >ms</text><rect x="601" y="1226" width="84.6" height="19.5" fill="url(#qbtn)" stroke="#b0b0b0" stroke-width="1" rx="2.5" /><text x="643.3" y="1240.07" font-size="12" fill="#000" text-anchor="middle" letter-spacing="-0.2" >New</text><rect x="601" y="1254.9" width="84.6" height="19.4" fill="url(#qbtn)" stroke="#b0b0b0" stroke-width="1" rx="2.5" /><text x="643.3" y="1268.92" font-size="12" fill="#000" text-anchor="middle" letter-spacing="-0.2" >Panel</text><rect x="696.9" y="1226" width="84.6" height="19.5" fill="url(#qbtn)" stroke="#b0b0b0" stroke-width="1" rx="2.5" /><text x="739.2" y="1240.07" font-size="12" fill="#000" text-anchor="middle" letter-spacing="-0.2" >Load</text><rect x="696.9" y="1254.9" width="84.6" height="19.4" fill="url(#qbtn)" stroke="#b0b0b0" stroke-width="1" rx="2.5" /><text x="739.2" y="1268.92" font-size="12" fill="#000" text-anchor="middle" letter-spacing="-0.2" >Code</text><rect x="792.8" y="1226" width="84.6" height="19.5" fill="url(#qbtn)" stroke="#b0b0b0" stroke-width="1" rx="2.5" /><text x="835.1" y="1240.07" font-size="12" fill="#000" text-anchor="middle" letter-spacing="-0.2" >Save</text><rect x="792.8" y="1254.9" width="84.6" height="19.4" fill="url(#qbtn)" stroke="#b0b0b0" stroke-width="1" rx="2.5" /><text x="835.1" y="1268.92" font-size="12" fill="#000" text-anchor="middle" letter-spacing="-0.2" >Log</text><rect x="887.8" y="1229.7" width="12" height="12" fill="#fdfdfd" stroke="#b4b4b4" stroke-width="1" rx="1.5" /><text x="906.1" y="1241" font-size="12" fill="#000" textLength="36.9" >In Doc.</text></g>
<g id="p_panel"><rect x="999" y="626.5" width="1044.5" height="693.8" fill="#000" opacity="0.55" filter="url(#shadow)"/><rect x="999" y="622.5" width="1044.5" height="693.8" fill="#f0f0f0" /><rect x="999" y="622.5" width="1044.5" height="28.6" fill="#ffffff" /><rect x="999.5" y="623" width="1043.5" height="692.8" fill="none" stroke="#a8a8a8" stroke-width="1" /><rect x="1007" y="629" width="15" height="15" fill="#0a7cff" /><text x="1014.5" y="639.2" font-size="7.8" fill="#e8f2ff" text-anchor="middle" letter-spacing="-0.3" font-weight="400">MD</text><text x="1027" y="641.4" font-size="12" fill="#999" lengthAdjust="spacingAndGlyphs" textLength="66.5" >SCADA Panel</text><rect x="1929" y="636.8" width="10" height="1" fill="#9a9a9a" /><rect x="1972.3" y="632.3" width="9" height="9" fill="none" stroke="#9a9a9a" stroke-width="1" /><path d="M2016 631.8 l10 10 M2026 631.8 l-10 10" stroke="#9a9a9a" stroke-width="1.1" fill="none"/><rect x="1010.8" y="663" width="1001" height="642" fill="#f0f0f0" stroke="#d2d2d2" stroke-width="1" /><path d="M2033 663 H2021 Q2018.5 663 2018.5 665.5 V680 Q2018.5 682.5 2021 682.5 H2033 Z" fill="#fbfbfb" stroke="#c8c8c8"/><text x="2024" y="678" font-size="11" fill="#000" >&lt;</text><path d="M2033 691.5 H2029 V957" fill="none" stroke="#c4c4c4"/><rect x="2029.85" y="942.35" width="2.8" height="11.3" fill="#fcfcfc" stroke="#d0d0d0" stroke-width="0.7" /><clipPath id="gcl1"><circle cx="1095.3" cy="740.3" r="62"/></clipPath><circle cx="1095.3" cy="740.3" r="67.5" fill="url(#gring)"/><circle cx="1095.3" cy="740.3" r="62" fill="url(#gface)"/><ellipse cx="1099.3" cy="768.65" rx="67.5" ry="58.05" fill="url(#glens)" clip-path="url(#gcl1)"/><circle cx="1095.3" cy="740.3" r="61.2" fill="none" stroke="#d6d6d6" stroke-width="1.6" opacity="0.8"/><line x1="1054.16" y1="740.3" x2="1049.36" y2="740.3" stroke="#0c0c0c" stroke-width="2" /><circle cx="1052.53" cy="732.14" r="0.75" fill="#0c0c0c"/><circle cx="1054.82" cy="724.27" r="0.75" fill="#0c0c0c"/><circle cx="1058.54" cy="716.97" r="0.75" fill="#0c0c0c"/><circle cx="1063.56" cy="710.5" r="0.75" fill="#0c0c0c"/><line x1="1071.12" y1="707.02" x2="1068.3" y2="703.14" stroke="#0c0c0c" stroke-width="2" /><circle cx="1076.76" cy="700.91" r="0.75" fill="#0c0c0c"/><circle cx="1084.47" cy="698.13" r="0.75" fill="#0c0c0c"/><circle cx="1092.57" cy="696.85" r="0.75" fill="#0c0c0c"/><circle cx="1100.76" cy="697.11" r="0.75" fill="#0c0c0c"/><line x1="1108.01" y1="701.18" x2="1109.5" y2="696.61" stroke="#0c0c0c" stroke-width="2" /><circle cx="1116.27" cy="702.15" r="0.75" fill="#0c0c0c"/><circle cx="1123.05" cy="706.75" r="0.75" fill="#0c0c0c"/><circle cx="1128.85" cy="712.55" r="0.75" fill="#0c0c0c"/><circle cx="1133.45" cy="719.33" r="0.75" fill="#0c0c0c"/><line x1="1134.42" y1="727.59" x2="1138.99" y2="726.1" stroke="#0c0c0c" stroke-width="2" /><circle cx="1138.49" cy="734.84" r="0.75" fill="#0c0c0c"/><circle cx="1138.75" cy="743.03" r="0.75" fill="#0c0c0c"/><circle cx="1137.47" cy="751.13" r="0.75" fill="#0c0c0c"/><circle cx="1134.69" cy="758.84" r="0.75" fill="#0c0c0c"/><line x1="1128.58" y1="764.48" x2="1132.46" y2="767.3" stroke="#0c0c0c" stroke-width="2" /><circle cx="1125.1" cy="772.04" r="0.75" fill="#ff1818"/><circle cx="1118.63" cy="777.06" r="0.75" fill="#ff1818"/><circle cx="1111.33" cy="780.78" r="0.75" fill="#ff1818"/><circle cx="1103.46" cy="783.07" r="0.75" fill="#ff1818"/><line x1="1095.3" y1="782.64" x2="1095.3" y2="787.84" stroke="#ff1818" stroke-width="2.2" /><text transform="translate(1040.29 740.3) rotate(270)" x="0" y="3.6" font-size="10.5" text-anchor="middle" fill="#111" letter-spacing="-0.4">0</text><text transform="translate(1062.96 695.79) rotate(324)" x="0" y="3.6" font-size="10.5" text-anchor="middle" fill="#111" letter-spacing="-0.4">20</text><text transform="translate(1112.3 687.98) rotate(378)" x="0" y="3.6" font-size="10.5" text-anchor="middle" fill="#111" letter-spacing="-0.4">40</text><text transform="translate(1147.62 723.3) rotate(432)" x="0" y="3.6" font-size="10.5" text-anchor="middle" fill="#111" letter-spacing="-0.4">60</text><text transform="translate(1139.81 772.64) rotate(486)" x="0" y="3.6" font-size="10.5" text-anchor="middle" fill="#111" letter-spacing="-0.4">80</text><text transform="translate(1095.3 795.31) rotate(540)" x="0" y="3.6" font-size="10.5" text-anchor="middle" fill="#111" letter-spacing="-0.4">100</text><path d="M1093.6 740.3 L1097 740.3 L1095.7 782.49 L1094.9 782.49 Z" fill="#e8262e"/><path d="M1095.3 743.3 L1095.3 774.49" stroke="#ff7a80" stroke-width="0.8"/><circle cx="1095.3" cy="740.3" r="3.4" fill="#5e5e5e"/><circle cx="1094.8" cy="739.6" r="1.6" fill="#808080"/><clipPath id="gcl2"><circle cx="1261.5" cy="741" r="60.8"/></clipPath><circle cx="1261.5" cy="741" r="66.3" fill="url(#gring)"/><circle cx="1261.5" cy="741" r="60.8" fill="url(#gface)"/><ellipse cx="1265.5" cy="768.85" rx="66.3" ry="57.02" fill="url(#glens)" clip-path="url(#gcl2)"/><circle cx="1261.5" cy="741" r="60" fill="none" stroke="#d6d6d6" stroke-width="1.6" opacity="0.8"/><line x1="1221.14" y1="741" x2="1216.34" y2="741" stroke="#0c0c0c" stroke-width="2" /><circle cx="1219.49" cy="732.99" r="0.75" fill="#0c0c0c"/><circle cx="1221.74" cy="725.26" r="0.75" fill="#0c0c0c"/><circle cx="1225.39" cy="718.09" r="0.75" fill="#0c0c0c"/><circle cx="1230.33" cy="711.73" r="0.75" fill="#0c0c0c"/><line x1="1237.77" y1="708.35" x2="1234.95" y2="704.46" stroke="#0c0c0c" stroke-width="2" /><circle cx="1243.29" cy="702.31" r="0.75" fill="#0c0c0c"/><circle cx="1250.87" cy="699.58" r="0.75" fill="#0c0c0c"/><circle cx="1258.81" cy="698.32" r="0.75" fill="#0c0c0c"/><circle cx="1266.86" cy="698.57" r="0.75" fill="#0c0c0c"/><line x1="1273.97" y1="702.61" x2="1275.46" y2="698.05" stroke="#0c0c0c" stroke-width="2" /><circle cx="1282.1" cy="703.53" r="0.75" fill="#0c0c0c"/><circle cx="1288.76" cy="708.05" r="0.75" fill="#0c0c0c"/><circle cx="1294.45" cy="713.74" r="0.75" fill="#0c0c0c"/><circle cx="1298.97" cy="720.4" r="0.75" fill="#0c0c0c"/><line x1="1299.89" y1="728.53" x2="1304.45" y2="727.04" stroke="#0c0c0c" stroke-width="2" /><circle cx="1303.93" cy="735.64" r="0.75" fill="#0c0c0c"/><circle cx="1304.18" cy="743.69" r="0.75" fill="#0c0c0c"/><circle cx="1302.92" cy="751.63" r="0.75" fill="#0c0c0c"/><circle cx="1300.19" cy="759.21" r="0.75" fill="#0c0c0c"/><line x1="1294.15" y1="764.73" x2="1298.04" y2="767.55" stroke="#0c0c0c" stroke-width="2" /><circle cx="1290.77" cy="772.17" r="0.75" fill="#ff1818"/><circle cx="1284.41" cy="777.11" r="0.75" fill="#ff1818"/><circle cx="1277.24" cy="780.76" r="0.75" fill="#ff1818"/><circle cx="1269.51" cy="783.01" r="0.75" fill="#ff1818"/><line x1="1261.5" y1="782.56" x2="1261.5" y2="787.76" stroke="#ff1818" stroke-width="2.2" /><text transform="translate(1207.47 741) rotate(270)" x="0" y="3.6" font-size="10.5" text-anchor="middle" fill="#111" letter-spacing="-0.4">0</text><text transform="translate(1229.74 697.29) rotate(324)" x="0" y="3.6" font-size="10.5" text-anchor="middle" fill="#111" letter-spacing="-0.4">20</text><text transform="translate(1278.2 689.61) rotate(378)" x="0" y="3.6" font-size="10.5" text-anchor="middle" fill="#111" letter-spacing="-0.4">40</text><text transform="translate(1312.89 724.3) rotate(432)" x="0" y="3.6" font-size="10.5" text-anchor="middle" fill="#111" letter-spacing="-0.4">60</text><text transform="translate(1305.21 772.76) rotate(486)" x="0" y="3.6" font-size="10.5" text-anchor="middle" fill="#111" letter-spacing="-0.4">80</text><text transform="translate(1261.5 795.03) rotate(540)" x="0" y="3.6" font-size="10.5" text-anchor="middle" fill="#111" letter-spacing="-0.4">100</text><path d="M1259.8 741 L1263.2 741 L1261.9 782.44 L1261.1 782.44 Z" fill="#e8262e"/><path d="M1261.5 744 L1261.5 774.44" stroke="#ff7a80" stroke-width="0.8"/><circle cx="1261.5" cy="741" r="3.4" fill="#5e5e5e"/><circle cx="1261" cy="740.3" r="1.6" fill="#808080"/><clipPath id="gcl3"><circle cx="1426.3" cy="739.2" r="62.9"/></clipPath><circle cx="1426.3" cy="739.2" r="68.4" fill="url(#gring)"/><circle cx="1426.3" cy="739.2" r="62.9" fill="url(#gface)"/><ellipse cx="1430.3" cy="767.93" rx="68.4" ry="58.82" fill="url(#glens)" clip-path="url(#gcl3)"/><circle cx="1426.3" cy="739.2" r="62.1" fill="none" stroke="#d6d6d6" stroke-width="1.6" opacity="0.8"/><line x1="1384.58" y1="739.2" x2="1379.78" y2="739.2" stroke="#0c0c0c" stroke-width="2" /><circle cx="1382.96" cy="730.93" r="0.75" fill="#0c0c0c"/><circle cx="1385.28" cy="722.96" r="0.75" fill="#0c0c0c"/><circle cx="1389.05" cy="715.56" r="0.75" fill="#0c0c0c"/><circle cx="1394.14" cy="709" r="0.75" fill="#0c0c0c"/><line x1="1401.78" y1="705.45" x2="1398.96" y2="701.57" stroke="#0c0c0c" stroke-width="2" /><circle cx="1407.52" cy="699.28" r="0.75" fill="#0c0c0c"/><circle cx="1415.33" cy="696.47" r="0.75" fill="#0c0c0c"/><circle cx="1423.53" cy="695.17" r="0.75" fill="#0c0c0c"/><circle cx="1431.83" cy="695.43" r="0.75" fill="#0c0c0c"/><line x1="1439.19" y1="699.52" x2="1440.67" y2="694.96" stroke="#0c0c0c" stroke-width="2" /><circle cx="1447.55" cy="700.54" r="0.75" fill="#0c0c0c"/><circle cx="1454.42" cy="705.21" r="0.75" fill="#0c0c0c"/><circle cx="1460.29" cy="711.08" r="0.75" fill="#0c0c0c"/><circle cx="1464.96" cy="717.95" r="0.75" fill="#0c0c0c"/><line x1="1465.98" y1="726.31" x2="1470.54" y2="724.83" stroke="#0c0c0c" stroke-width="2" /><circle cx="1470.07" cy="733.67" r="0.75" fill="#0c0c0c"/><circle cx="1470.33" cy="741.97" r="0.75" fill="#0c0c0c"/><circle cx="1469.03" cy="750.17" r="0.75" fill="#0c0c0c"/><circle cx="1466.22" cy="757.98" r="0.75" fill="#0c0c0c"/><line x1="1460.05" y1="763.72" x2="1463.93" y2="766.54" stroke="#0c0c0c" stroke-width="2" /><circle cx="1456.5" cy="771.36" r="0.75" fill="#ff1818"/><circle cx="1449.94" cy="776.45" r="0.75" fill="#ff1818"/><circle cx="1442.54" cy="780.22" r="0.75" fill="#ff1818"/><circle cx="1434.57" cy="782.54" r="0.75" fill="#ff1818"/><line x1="1426.3" y1="782.12" x2="1426.3" y2="787.32" stroke="#ff1818" stroke-width="2.2" /><text transform="translate(1370.55 739.2) rotate(270)" x="0" y="3.6" font-size="10.5" text-anchor="middle" fill="#111" letter-spacing="-0.4">0</text><text transform="translate(1393.53 694.1) rotate(324)" x="0" y="3.6" font-size="10.5" text-anchor="middle" fill="#111" letter-spacing="-0.4">20</text><text transform="translate(1443.53 686.18) rotate(378)" x="0" y="3.6" font-size="10.5" text-anchor="middle" fill="#111" letter-spacing="-0.4">40</text><text transform="translate(1479.32 721.97) rotate(432)" x="0" y="3.6" font-size="10.5" text-anchor="middle" fill="#111" letter-spacing="-0.4">60</text><text transform="translate(1471.4 771.97) rotate(486)" x="0" y="3.6" font-size="10.5" text-anchor="middle" fill="#111" letter-spacing="-0.4">80</text><text transform="translate(1426.3 794.95) rotate(540)" x="0" y="3.6" font-size="10.5" text-anchor="middle" fill="#111" letter-spacing="-0.4">100</text><path d="M1424.6 739.2 L1428 739.2 L1426.7 781.95 L1425.9 781.95 Z" fill="#e8262e"/><path d="M1426.3 742.2 L1426.3 773.95" stroke="#ff7a80" stroke-width="0.8"/><circle cx="1426.3" cy="739.2" r="3.4" fill="#5e5e5e"/><circle cx="1425.8" cy="738.5" r="1.6" fill="#808080"/><text x="1049" y="824.8" font-size="18" fill="#a6a6a6" textLength="93.2" >1 7017 AI 2</text><text x="1214.95" y="824.8" font-size="18" fill="#a6a6a6" textLength="93.3" >1 7017 AI 4</text><text x="1379.95" y="824.8" font-size="18" fill="#a6a6a6" textLength="92.7" >1 7017 AI 7</text><circle cx="1092" cy="856.2" r="17" fill="#9a9a9a"/><circle cx="1092" cy="856.2" r="15.4" fill="url(#ledg)"/><ellipse cx="1092" cy="849.06" rx="9.35" ry="5.1" fill="#fff" opacity="0.35"/><circle cx="1257.1" cy="857" r="17" fill="#9a9a9a"/><circle cx="1257.1" cy="857" r="15.4" fill="url(#ledg)"/><ellipse cx="1257.1" cy="849.86" rx="9.35" ry="5.1" fill="#fff" opacity="0.35"/><circle cx="1425.6" cy="858.3" r="17" fill="#9a9a9a"/><circle cx="1425.6" cy="858.3" r="15.4" fill="url(#ledg)"/><ellipse cx="1425.6" cy="851.16" rx="9.35" ry="5.1" fill="#fff" opacity="0.35"/><text x="1077.35" y="894.3" font-size="18" fill="#a6a6a6" textLength="28.3" >AI2</text><text x="1243" y="895.6" font-size="18" fill="#a6a6a6" textLength="28" >AI4</text><text x="1411.35" y="897" font-size="18" fill="#a6a6a6" textLength="27.3" >AI7</text><rect x="1555.4" y="701.1" width="162.6" height="54.7" fill="#050505" rx="3.5" /><rect x="1558.4" y="704.1" width="156.6" height="48.7" fill="url(#lcd1)" rx="1" /><text transform="translate(1575.6 746.4) scale(0.8 1)" x="0" y="0" font-size="48.5" font-weight="bold" fill="#e0e0ff" fill-opacity="0.42" stroke="#ffffff" stroke-width="1.9" stroke-linejoin="round">0</text><text transform="translate(1600 746.4) scale(0.8 1)" x="0" y="0" font-size="48.5" font-weight="bold" fill="#e0e0ff" fill-opacity="0.42" stroke="#ffffff" stroke-width="1.9" stroke-linejoin="round">0</text><text transform="translate(1634.5 746.4) scale(0.5 1)" x="0" y="0" font-size="48.5" font-weight="bold" fill="#e0e0ff" fill-opacity="0.42" stroke="#ffffff" stroke-width="2.4" stroke-linejoin="round">1</text><text transform="translate(1645.6 746.4) scale(0.5 1)" x="0" y="0" font-size="48.5" font-weight="bold" fill="#e0e0ff" fill-opacity="0.42" stroke="#ffffff" stroke-width="2.4" stroke-linejoin="round">.</text><text transform="translate(1648.8 746.4) scale(0.8 1)" x="0" y="0" font-size="48.5" font-weight="bold" fill="#e0e0ff" fill-opacity="0.42" stroke="#ffffff" stroke-width="1.9" stroke-linejoin="round">0</text><text transform="translate(1673.2 746.4) scale(0.8 1)" x="0" y="0" font-size="48.5" font-weight="bold" fill="#e0e0ff" fill-opacity="0.42" stroke="#ffffff" stroke-width="1.9" stroke-linejoin="round">3</text><text x="1604.95" y="772" font-size="18" fill="#a6a6a6" textLength="63.3" >topTank</text><rect x="1791" y="924.7" width="162.5" height="54.6" fill="#050505" rx="3.5" /><rect x="1794" y="927.7" width="156.5" height="48.6" fill="url(#lcd2)" rx="1" /><text transform="translate(1810.4 969.2) scale(0.8 1)" x="0" y="0" font-size="47" font-weight="bold" fill="#e0e0ff" fill-opacity="0.42" stroke="#ffffff" stroke-width="1.9" stroke-linejoin="round">0</text><text transform="translate(1834.6 969.2) scale(0.8 1)" x="0" y="0" font-size="47" font-weight="bold" fill="#e0e0ff" fill-opacity="0.42" stroke="#ffffff" stroke-width="1.9" stroke-linejoin="round">2</text><text transform="translate(1858.8 969.2) scale(0.8 1)" x="0" y="0" font-size="47" font-weight="bold" fill="#e0e0ff" fill-opacity="0.42" stroke="#ffffff" stroke-width="1.9" stroke-linejoin="round">2</text><text transform="translate(1880.2 969.2) scale(0.5 1)" x="0" y="0" font-size="47" font-weight="bold" fill="#e0e0ff" fill-opacity="0.42" stroke="#ffffff" stroke-width="2.4" stroke-linejoin="round">.</text><text transform="translate(1883.4 969.2) scale(0.8 1)" x="0" y="0" font-size="47" font-weight="bold" fill="#e0e0ff" fill-opacity="0.42" stroke="#ffffff" stroke-width="1.9" stroke-linejoin="round">8</text><text transform="translate(1907.6 969.2) scale(0.8 1)" x="0" y="0" font-size="47" font-weight="bold" fill="#e0e0ff" fill-opacity="0.42" stroke="#ffffff" stroke-width="1.9" stroke-linejoin="round">6</text><text x="1838.95" y="996.4" font-size="18" fill="#a6a6a6" textLength="66.5" >midTank</text><path d="M1836.4 812 V850.3 A13 13 0 0 1 1823.4 863.3 H1717.5 A13 13 0 0 0 1704.5 876.3 V892" fill="none" stroke="#7e7e7e" stroke-width="14.2" /><path d="M1836.4 812 V850.3 A13 13 0 0 1 1823.4 863.3 H1717.5 A13 13 0 0 0 1704.5 876.3 V892" fill="none" stroke="#9c9c9c" stroke-width="11.36" /><path d="M1836.4 812 V850.3 A13 13 0 0 1 1823.4 863.3 H1717.5 A13 13 0 0 0 1704.5 876.3 V892" fill="none" stroke="#b9b9b9" stroke-width="8.24" /><path d="M1836.4 812 V850.3 A13 13 0 0 1 1823.4 863.3 H1717.5 A13 13 0 0 0 1704.5 876.3 V892" fill="none" stroke="#d2d2d2" stroke-width="5.4" /><path d="M1836.4 812 V850.3 A13 13 0 0 1 1823.4 863.3 H1717.5 A13 13 0 0 0 1704.5 876.3 V892" fill="none" stroke="#e4e4e4" stroke-width="2.56" /><rect x="1827.7" y="836.4" width="16.1" height="3.4" fill="url(#flh)" stroke="#707070" stroke-width="0.8" rx="0.8" /><rect x="1811.7" y="854.4" width="2.6" height="17.8" fill="url(#flv)" stroke="#707070" stroke-width="0.8" rx="0.8" /><rect x="1728" y="854.4" width="3.2" height="17.8" fill="url(#flv)" stroke="#707070" stroke-width="0.8" rx="0.8" /><rect x="1695.7" y="887.6" width="17.2" height="3.2" fill="url(#flh)" stroke="#707070" stroke-width="0.8" rx="0.8" /><path d="M1703.2 1060.8 H1644.8 A16 16 0 0 0 1628.8 1076.8 V1128" fill="none" stroke="#7e7e7e" stroke-width="17" /><path d="M1703.2 1060.8 H1644.8 A16 16 0 0 0 1628.8 1076.8 V1128" fill="none" stroke="#9c9c9c" stroke-width="13.6" /><path d="M1703.2 1060.8 H1644.8 A16 16 0 0 0 1628.8 1076.8 V1128" fill="none" stroke="#b9b9b9" stroke-width="9.86" /><path d="M1703.2 1060.8 H1644.8 A16 16 0 0 0 1628.8 1076.8 V1128" fill="none" stroke="#d2d2d2" stroke-width="6.46" /><path d="M1703.2 1060.8 H1644.8 A16 16 0 0 0 1628.8 1076.8 V1128" fill="none" stroke="#e4e4e4" stroke-width="3.06" /><path d="M1703.2 1060.8 H1831.4 A16 16 0 0 1 1847.4 1076.8 V1128" fill="none" stroke="#7e7e7e" stroke-width="16" /><path d="M1703.2 1060.8 H1831.4 A16 16 0 0 1 1847.4 1076.8 V1128" fill="none" stroke="#9c9c9c" stroke-width="12.8" /><path d="M1703.2 1060.8 H1831.4 A16 16 0 0 1 1847.4 1076.8 V1128" fill="none" stroke="#b9b9b9" stroke-width="9.28" /><path d="M1703.2 1060.8 H1831.4 A16 16 0 0 1 1847.4 1076.8 V1128" fill="none" stroke="#d2d2d2" stroke-width="6.08" /><path d="M1703.2 1060.8 H1831.4 A16 16 0 0 1 1847.4 1076.8 V1128" fill="none" stroke="#e4e4e4" stroke-width="2.88" /><path d="M1703.2 1020 V1052" fill="none" stroke="#7e7e7e" stroke-width="13.8" /><path d="M1703.2 1020 V1052" fill="none" stroke="#9c9c9c" stroke-width="11.04" /><path d="M1703.2 1020 V1052" fill="none" stroke="#b9b9b9" stroke-width="8" /><path d="M1703.2 1020 V1052" fill="none" stroke="#d2d2d2" stroke-width="5.24" /><path d="M1703.2 1020 V1052" fill="none" stroke="#e4e4e4" stroke-width="2.48" /><rect x="1693.8" y="1043" width="17.4" height="10.4" fill="#8a8a8a" /><path d="M1693.8 1053 V1050 H1711.2 V1053 A8.7 6 0 0 1 1693.8 1053 Z" fill="#8c8c8c"/><path d="M1695.5 1043 V1054 A7.2 5 0 0 0 1709.5 1054 V1043 Z" fill="#a2a2a2"/><rect x="1691.6" y="1038.7" width="21.7" height="3.7" fill="url(#flh)" stroke="#707070" stroke-width="0.8" rx="0.8" /><rect x="1658.4" y="1049.7" width="3.6" height="23.4" fill="url(#flv)" stroke="#707070" stroke-width="0.8" rx="0.8" /><rect x="1680.4" y="1049.7" width="3.6" height="23.4" fill="url(#flv)" stroke="#707070" stroke-width="0.8" rx="0.8" /><rect x="1720.6" y="1049.7" width="3.6" height="23.4" fill="url(#flv)" stroke="#707070" stroke-width="0.8" rx="0.8" /><rect x="1816" y="1049.7" width="3.6" height="23.4" fill="url(#flv)" stroke="#707070" stroke-width="0.8" rx="0.8" /><rect x="1617.3" y="1093.9" width="22.3" height="3.7" fill="url(#flh)" stroke="#707070" stroke-width="0.8" rx="0.8" /><rect x="1836.8" y="1088.8" width="20.3" height="3.6" fill="url(#flh)" stroke="#707070" stroke-width="0.8" rx="0.8" /><path d="M1492 1102 V875.2 A15 15 0 0 1 1507 860.2 H1533 A15 15 0 0 1 1548 875.2 V897" fill="none" stroke="#767676" stroke-width="23.6" /><path d="M1492 1102 V875.2 A15 15 0 0 1 1507 860.2 H1533 A15 15 0 0 1 1548 875.2 V897" fill="none" stroke="#888888" stroke-width="18.88" /><path d="M1492 1102 V875.2 A15 15 0 0 1 1507 860.2 H1533 A15 15 0 0 1 1548 875.2 V897" fill="none" stroke="#979797" stroke-width="13.69" /><path d="M1492 1102 V875.2 A15 15 0 0 1 1507 860.2 H1533 A15 15 0 0 1 1548 875.2 V897" fill="none" stroke="#a2a2a2" stroke-width="8.97" /><path d="M1492 1102 V875.2 A15 15 0 0 1 1507 860.2 H1533 A15 15 0 0 1 1548 875.2 V897" fill="none" stroke="#a9a9a9" stroke-width="4.25" /><path d="M1492 1102 V905" fill="none" stroke="#7e7e7e" stroke-width="23" /><path d="M1492 1102 V905" fill="none" stroke="#9c9c9c" stroke-width="18.4" /><path d="M1492 1102 V905" fill="none" stroke="#b9b9b9" stroke-width="13.34" /><path d="M1492 1102 V905" fill="none" stroke="#d2d2d2" stroke-width="8.74" /><path d="M1492 1102 V905" fill="none" stroke="#e4e4e4" stroke-width="4.14" /><path d="M1547.7 897 V915" fill="none" stroke="#7e7e7e" stroke-width="16.6" /><path d="M1547.7 897 V915" fill="none" stroke="#9c9c9c" stroke-width="13.28" /><path d="M1547.7 897 V915" fill="none" stroke="#b9b9b9" stroke-width="9.63" /><path d="M1547.7 897 V915" fill="none" stroke="#d2d2d2" stroke-width="6.31" /><path d="M1547.7 897 V915" fill="none" stroke="#e4e4e4" stroke-width="2.99" /><rect x="1477.8" y="902" width="28.4" height="4.9" fill="url(#flh)" stroke="#707070" stroke-width="0.8" rx="0.8" /><rect x="1531" y="844.7" width="5.3" height="30.3" fill="url(#flv)" stroke="#707070" stroke-width="0.8" rx="0.8" /><rect x="1535.1" y="894.8" width="25.4" height="3.8" fill="url(#flh)" stroke="#707070" stroke-width="0.8" rx="0.8" /><path d="M1568.3 936 V960" fill="none" stroke="#7e7e7e" stroke-width="17.2" /><path d="M1568.3 936 V960" fill="none" stroke="#9c9c9c" stroke-width="13.76" /><path d="M1568.3 936 V960" fill="none" stroke="#b9b9b9" stroke-width="9.98" /><path d="M1568.3 936 V960" fill="none" stroke="#d2d2d2" stroke-width="6.54" /><path d="M1568.3 936 V960" fill="none" stroke="#e4e4e4" stroke-width="3.1" /><path d="M1568.3 960 V980 A15.5 15.5 0 0 0 1583.8 995.6 H1597" fill="none" stroke="#7a7a7a" stroke-width="16.4" /><path d="M1568.3 960 V980 A15.5 15.5 0 0 0 1583.8 995.6 H1597" fill="none" stroke="#8c8c8c" stroke-width="13.12" /><path d="M1568.3 960 V980 A15.5 15.5 0 0 0 1583.8 995.6 H1597" fill="none" stroke="#9c9c9c" stroke-width="9.51" /><path d="M1568.3 960 V980 A15.5 15.5 0 0 0 1583.8 995.6 H1597" fill="none" stroke="#a8a8a8" stroke-width="6.23" /><path d="M1568.3 960 V980 A15.5 15.5 0 0 0 1583.8 995.6 H1597" fill="none" stroke="#b0b0b0" stroke-width="2.95" /><path d="M1597 995.6 H1632" fill="none" stroke="#7e7e7e" stroke-width="14.6" /><path d="M1597 995.6 H1632" fill="none" stroke="#9c9c9c" stroke-width="11.68" /><path d="M1597 995.6 H1632" fill="none" stroke="#b9b9b9" stroke-width="8.47" /><path d="M1597 995.6 H1632" fill="none" stroke="#d2d2d2" stroke-width="5.55" /><path d="M1597 995.6 H1632" fill="none" stroke="#e4e4e4" stroke-width="2.63" /><rect x="1558" y="958.3" width="19.8" height="3.9" fill="url(#flh)" stroke="#707070" stroke-width="0.8" rx="0.8" /><rect x="1595.4" y="982.8" width="3.9" height="23.8" fill="url(#flv)" stroke="#707070" stroke-width="0.8" rx="0.8" /><circle cx="1558" cy="925.7" r="19.5" fill="url(#pumpg)" stroke="#9a9a9a" stroke-width="0.9"/><circle cx="1558" cy="925.7" r="14" fill="#dcdcdc" stroke="#353535" stroke-width="2"/><path d="M1558 924.6 C1555.2 921 1554.6 916.6 1557.4 913.6 C1561 916.4 1562 920.6 1559.8 924.4 Z" fill="#3a3a3a" transform="rotate(10 1558 925.7)"/><path d="M1558 924.6 C1555.2 921 1554.6 916.6 1557.4 913.6 C1561 916.4 1562 920.6 1559.8 924.4 Z" fill="#3a3a3a" transform="rotate(82 1558 925.7)"/><path d="M1558 924.6 C1555.2 921 1554.6 916.6 1557.4 913.6 C1561 916.4 1562 920.6 1559.8 924.4 Z" fill="#3a3a3a" transform="rotate(154 1558 925.7)"/><path d="M1558 924.6 C1555.2 921 1554.6 916.6 1557.4 913.6 C1561 916.4 1562 920.6 1559.8 924.4 Z" fill="#3a3a3a" transform="rotate(226 1558 925.7)"/><path d="M1558 924.6 C1555.2 921 1554.6 916.6 1557.4 913.6 C1561 916.4 1562 920.6 1559.8 924.4 Z" fill="#3a3a3a" transform="rotate(298 1558 925.7)"/><circle cx="1558" cy="925.7" r="1.3" fill="#e8e8e8" stroke="#444" stroke-width="0.5"/><path d="M1229.5 998.7 H1291" fill="none" stroke="#00008c" stroke-width="24.6" /><path d="M1229.5 998.7 H1291" fill="none" stroke="#0000b0" stroke-width="19.68" /><path d="M1229.5 998.7 H1291" fill="none" stroke="#0000cc" stroke-width="14.27" /><path d="M1229.5 998.7 H1291" fill="none" stroke="#0000de" stroke-width="9.35" /><path d="M1229.5 998.7 H1291" fill="none" stroke="#0000e6" stroke-width="4.43" /><path d="M1332.7 1041 V1144" fill="none" stroke="#00008c" stroke-width="22.8" /><path d="M1332.7 1041 V1144" fill="none" stroke="#0000b0" stroke-width="18.24" /><path d="M1332.7 1041 V1144" fill="none" stroke="#0000cc" stroke-width="13.22" /><path d="M1332.7 1041 V1144" fill="none" stroke="#0000de" stroke-width="8.66" /><path d="M1332.7 1041 V1144" fill="none" stroke="#0000e6" stroke-width="4.1" /><path d="M1291 998.7 H1310.7 A22 22 0 0 1 1332.7 1020.7 V1041" fill="none" stroke="#000060" stroke-width="24.6" /><path d="M1291 998.7 H1310.7 A22 22 0 0 1 1332.7 1020.7 V1041" fill="none" stroke="#000074" stroke-width="19.68" /><path d="M1291 998.7 H1310.7 A22 22 0 0 1 1332.7 1020.7 V1041" fill="none" stroke="#000086" stroke-width="14.27" /><path d="M1291 998.7 H1310.7 A22 22 0 0 1 1332.7 1020.7 V1041" fill="none" stroke="#00008e" stroke-width="9.35" /><path d="M1291 998.7 H1310.7 A22 22 0 0 1 1332.7 1020.7 V1041" fill="none" stroke="#000094" stroke-width="4.43" /><rect x="1288.5" y="983.9" width="5.3" height="29.5" fill="#00006c" stroke="#000050" stroke-width="0.8" /><rect x="1318.7" y="1038.6" width="29.9" height="5.5" fill="#00006c" stroke="#000050" stroke-width="0.8" /><path d="M1797.3 669.2 H1875.5 L1880.9 678.6 V784 L1842.7 826 H1830 L1791.8 784 V678.6 Z" fill="url(#tankg)"/><path d="M1791.8 784 H1880.9 L1842.7 826 H1830 Z" fill="#000" opacity="0.12"/><path d="M1805.8 675.5 V798.6 H1866.4 V675.5 Z" fill="url(#glassg)"/><ellipse cx="1836.1" cy="675.5" rx="30.3" ry="3.4" fill="#9a9a9a"/><ellipse cx="1836.1" cy="675.9" rx="25.4" ry="2.3" fill="#767676"/><rect x="1818" y="678" width="7" height="120" fill="#fff" opacity="0.10"/><rect x="1815.5" y="691" width="11" height="1" fill="#aaa" opacity="0.6"/><rect x="1815.5" y="716.5" width="11" height="1" fill="#aaa" opacity="0.6"/><rect x="1815.5" y="742.5" width="11" height="1" fill="#aaa" opacity="0.6"/><rect x="1815.5" y="767.8" width="11" height="1" fill="#aaa" opacity="0.6"/><rect x="1815.5" y="792.6" width="11" height="1" fill="#aaa" opacity="0.6"/><rect x="1805.8" y="784" width="60.6" height="14" fill="#999" opacity="0.25"/><rect x="1805.8" y="798.2" width="60.6" height="1" fill="#6464ff" /><rect x="1858" y="798.1" width="5" height="1.8" fill="#0a0a0a" /><rect x="1858.6" y="793.61" width="1.3" height="1.2" fill="#0a0a0a" /><rect x="1858.6" y="788.82" width="1.3" height="1.2" fill="#0a0a0a" /><rect x="1858.6" y="784.02" width="1.3" height="1.2" fill="#0a0a0a" /><rect x="1858.6" y="779.23" width="1.3" height="1.2" fill="#0a0a0a" /><rect x="1858" y="774.14" width="5" height="1.8" fill="#0a0a0a" /><rect x="1858.6" y="769.65" width="1.3" height="1.2" fill="#0a0a0a" /><rect x="1858.6" y="764.86" width="1.3" height="1.2" fill="#0a0a0a" /><rect x="1858.6" y="760.06" width="1.3" height="1.2" fill="#0a0a0a" /><rect x="1858.6" y="755.27" width="1.3" height="1.2" fill="#0a0a0a" /><rect x="1858" y="750.18" width="5" height="1.8" fill="#0a0a0a" /><rect x="1858.6" y="745.69" width="1.3" height="1.2" fill="#0a0a0a" /><rect x="1858.6" y="740.9" width="1.3" height="1.2" fill="#0a0a0a" /><rect x="1858.6" y="736.1" width="1.3" height="1.2" fill="#0a0a0a" /><rect x="1858.6" y="731.31" width="1.3" height="1.2" fill="#0a0a0a" /><rect x="1858" y="726.22" width="5" height="1.8" fill="#0a0a0a" /><rect x="1858.6" y="721.73" width="1.3" height="1.2" fill="#0a0a0a" /><rect x="1858.6" y="716.94" width="1.3" height="1.2" fill="#0a0a0a" /><rect x="1858.6" y="712.14" width="1.3" height="1.2" fill="#0a0a0a" /><rect x="1858.6" y="707.35" width="1.3" height="1.2" fill="#0a0a0a" /><rect x="1858" y="702.26" width="5" height="1.8" fill="#0a0a0a" /><rect x="1858.6" y="697.77" width="1.3" height="1.2" fill="#ff1010" /><rect x="1858.6" y="692.98" width="1.3" height="1.2" fill="#ff1010" /><rect x="1858.6" y="688.18" width="1.3" height="1.2" fill="#ff1010" /><rect x="1858.6" y="683.39" width="1.3" height="1.2" fill="#ff1010" /><rect x="1858" y="678.3" width="5" height="1.8" fill="#ff1010" /><text x="1867.6" y="803" font-size="11" fill="#1c1cf0" letter-spacing="-0.4" >0</text><text x="1867.6" y="779.04" font-size="11" fill="#1c1cf0" letter-spacing="-0.4" >20</text><text x="1867.6" y="755.08" font-size="11" fill="#1c1cf0" letter-spacing="-0.4" >40</text><text x="1867.6" y="731.12" font-size="11" fill="#1c1cf0" letter-spacing="-0.4" >60</text><text x="1867.6" y="707.16" font-size="11" fill="#1c1cf0" letter-spacing="-0.4" >80</text><text x="1867.6" y="683.2" font-size="11" fill="#1c1cf0" letter-spacing="-0.4" >100</text><path d="M1836.4 814.6 V832" fill="none" stroke="#7e7e7e" stroke-width="12.8" /><path d="M1836.4 814.6 V832" fill="none" stroke="#9c9c9c" stroke-width="10.24" /><path d="M1836.4 814.6 V832" fill="none" stroke="#b9b9b9" stroke-width="7.42" /><path d="M1836.4 814.6 V832" fill="none" stroke="#d2d2d2" stroke-width="4.86" /><path d="M1836.4 814.6 V832" fill="none" stroke="#e4e4e4" stroke-width="2.3" /><path d="M1636 890.8 H1771.7 L1776.7 896 V1017 L1771.7 1022 H1636 L1631 1017 V896 Z" fill="url(#tankg)"/><rect x="1631" y="890.8" width="145.7" height="9" fill="#fff" opacity="0.07"/><rect x="1631" y="1015" width="145.7" height="7" fill="#fff" opacity="0.07"/><rect x="1646.2" y="989" width="119" height="26.1" fill="#5555fa" /><rect x="1725.6" y="1010.46" width="1.3" height="1.2" fill="#0a0a0a" /><rect x="1725.6" y="1005.93" width="1.3" height="1.2" fill="#0a0a0a" /><rect x="1725.6" y="1001.39" width="1.3" height="1.2" fill="#0a0a0a" /><rect x="1725.6" y="996.86" width="1.3" height="1.2" fill="#0a0a0a" /><rect x="1725" y="992.02" width="5" height="1.8" fill="#0a0a0a" /><rect x="1725.6" y="987.78" width="1.3" height="1.2" fill="#0a0a0a" /><rect x="1725.6" y="983.25" width="1.3" height="1.2" fill="#0a0a0a" /><rect x="1725.6" y="978.71" width="1.3" height="1.2" fill="#0a0a0a" /><rect x="1725.6" y="974.18" width="1.3" height="1.2" fill="#0a0a0a" /><rect x="1725" y="969.34" width="5" height="1.8" fill="#0a0a0a" /><rect x="1725.6" y="965.1" width="1.3" height="1.2" fill="#0a0a0a" /><rect x="1725.6" y="960.57" width="1.3" height="1.2" fill="#0a0a0a" /><rect x="1725.6" y="956.03" width="1.3" height="1.2" fill="#0a0a0a" /><rect x="1725.6" y="951.5" width="1.3" height="1.2" fill="#0a0a0a" /><rect x="1725" y="946.66" width="5" height="1.8" fill="#0a0a0a" /><rect x="1725.6" y="942.42" width="1.3" height="1.2" fill="#0a0a0a" /><rect x="1725.6" y="937.89" width="1.3" height="1.2" fill="#0a0a0a" /><rect x="1725.6" y="933.35" width="1.3" height="1.2" fill="#0a0a0a" /><rect x="1725.6" y="928.82" width="1.3" height="1.2" fill="#0a0a0a" /><rect x="1725" y="923.98" width="5" height="1.8" fill="#0a0a0a" /><rect x="1725.6" y="919.74" width="1.3" height="1.2" fill="#ff1010" /><rect x="1725.6" y="915.21" width="1.3" height="1.2" fill="#ff1010" /><rect x="1725.6" y="910.67" width="1.3" height="1.2" fill="#ff1010" /><rect x="1725.6" y="906.14" width="1.3" height="1.2" fill="#ff1010" /><rect x="1725" y="901.3" width="5" height="1.8" fill="#ff1010" /><g clip-path="url(#clipmid)"><text x="1734" y="1019.6" font-size="11" fill="#111" letter-spacing="-0.4" >0</text><text x="1734" y="996.92" font-size="11" fill="#111" letter-spacing="-0.4" >20</text><text x="1734" y="974.24" font-size="11" fill="#111" letter-spacing="-0.4" >40</text><text x="1734" y="951.56" font-size="11" fill="#111" letter-spacing="-0.4" >60</text><text x="1734" y="928.88" font-size="11" fill="#111" letter-spacing="-0.4" >80</text><text x="1734" y="906.2" font-size="11" fill="#111" letter-spacing="-0.4" >100</text></g><path d="M1367.3 1135 Q1367.3 1118 1392 1106 Q1420 1092.5 1452.4 1092.5 Q1485 1092.5 1513 1106 Q1537.5 1118 1537.5 1135 V1256 L1528.8 1267.2 H1376.6 L1367.3 1256 Z" fill="url(#redh)"/><path d="M1367.3 1135 Q1367.3 1118 1392 1106 Q1420 1092.5 1452.4 1092.5 Q1485 1092.5 1513 1106 Q1537.5 1118 1537.5 1135 V1256 L1528.8 1267.2 H1376.6 L1367.3 1256 Z" fill="url(#redtop)"/><rect x="1370" y="1154" width="164.2" height="102" fill="#5555fa" /><rect x="1479.6" y="1250.5" width="1.3" height="1.2" fill="#0a0a0a" /><rect x="1479.6" y="1245.21" width="1.3" height="1.2" fill="#0a0a0a" /><rect x="1479.6" y="1239.91" width="1.3" height="1.2" fill="#0a0a0a" /><rect x="1479.6" y="1234.62" width="1.3" height="1.2" fill="#0a0a0a" /><rect x="1479" y="1229.02" width="5" height="1.8" fill="#0a0a0a" /><rect x="1479.6" y="1224.02" width="1.3" height="1.2" fill="#0a0a0a" /><rect x="1479.6" y="1218.73" width="1.3" height="1.2" fill="#0a0a0a" /><rect x="1479.6" y="1213.43" width="1.3" height="1.2" fill="#0a0a0a" /><rect x="1479.6" y="1208.14" width="1.3" height="1.2" fill="#0a0a0a" /><rect x="1479" y="1202.54" width="5" height="1.8" fill="#0a0a0a" /><rect x="1479.6" y="1197.54" width="1.3" height="1.2" fill="#0a0a0a" /><rect x="1479.6" y="1192.25" width="1.3" height="1.2" fill="#0a0a0a" /><rect x="1479.6" y="1186.95" width="1.3" height="1.2" fill="#0a0a0a" /><rect x="1479.6" y="1181.66" width="1.3" height="1.2" fill="#0a0a0a" /><rect x="1479" y="1176.06" width="5" height="1.8" fill="#0a0a0a" /><rect x="1479.6" y="1171.06" width="1.3" height="1.2" fill="#0a0a0a" /><rect x="1479.6" y="1165.77" width="1.3" height="1.2" fill="#0a0a0a" /><rect x="1479.6" y="1160.47" width="1.3" height="1.2" fill="#0a0a0a" /><rect x="1479.6" y="1155.18" width="1.3" height="1.2" fill="#0a0a0a" /><rect x="1479" y="1149.58" width="5" height="1.8" fill="#0a0a0a" /><rect x="1479.6" y="1144.58" width="1.3" height="1.2" fill="#ff1010" /><rect x="1479.6" y="1139.29" width="1.3" height="1.2" fill="#ff1010" /><rect x="1479.6" y="1133.99" width="1.3" height="1.2" fill="#ff1010" /><rect x="1479.6" y="1128.7" width="1.3" height="1.2" fill="#ff1010" /><rect x="1479" y="1123.1" width="5" height="1.8" fill="#ff1010" /><g clip-path="url(#clipred)"><text x="1488.9" y="1260.4" font-size="11" fill="#161616" letter-spacing="-0.4" >0</text><text x="1488.9" y="1233.92" font-size="11" fill="#161616" letter-spacing="-0.4" >20</text><text x="1488.9" y="1207.44" font-size="11" fill="#161616" letter-spacing="-0.4" >40</text><text x="1488.9" y="1180.96" font-size="11" fill="#161616" letter-spacing="-0.4" >60</text><text x="1488.9" y="1154.48" font-size="11" fill="#161616" letter-spacing="-0.4" >80</text><text x="1488.9" y="1128" font-size="11" fill="#161616" letter-spacing="-0.4" >100</text></g><path d="M1563.7 1145.7 L1628.7 1122 L1693.6 1145.7 V1255 H1563.7 Z" fill="url(#tankg)"/><path d="M1563.7 1145.7 L1628.7 1122 L1693.6 1145.7 Z" fill="#999" opacity="0.55"/><rect x="1555.7" y="1255" width="146.1" height="8.4" fill="url(#tankg)" /><rect x="1649" y="1250.16" width="1.3" height="1.2" fill="#0a0a0a" /><rect x="1649" y="1245.92" width="1.3" height="1.2" fill="#0a0a0a" /><rect x="1649" y="1241.68" width="1.3" height="1.2" fill="#0a0a0a" /><rect x="1649" y="1237.44" width="1.3" height="1.2" fill="#0a0a0a" /><rect x="1648.4" y="1232.9" width="5" height="1.8" fill="#0a0a0a" /><rect x="1649" y="1228.96" width="1.3" height="1.2" fill="#0a0a0a" /><rect x="1649" y="1224.72" width="1.3" height="1.2" fill="#0a0a0a" /><rect x="1649" y="1220.48" width="1.3" height="1.2" fill="#0a0a0a" /><rect x="1649" y="1216.24" width="1.3" height="1.2" fill="#0a0a0a" /><rect x="1648.4" y="1211.7" width="5" height="1.8" fill="#0a0a0a" /><rect x="1649" y="1207.76" width="1.3" height="1.2" fill="#0a0a0a" /><rect x="1649" y="1203.52" width="1.3" height="1.2" fill="#0a0a0a" /><rect x="1649" y="1199.28" width="1.3" height="1.2" fill="#0a0a0a" /><rect x="1649" y="1195.04" width="1.3" height="1.2" fill="#0a0a0a" /><rect x="1648.4" y="1190.5" width="5" height="1.8" fill="#0a0a0a" /><rect x="1649" y="1186.56" width="1.3" height="1.2" fill="#0a0a0a" /><rect x="1649" y="1182.32" width="1.3" height="1.2" fill="#0a0a0a" /><rect x="1649" y="1178.08" width="1.3" height="1.2" fill="#0a0a0a" /><rect x="1649" y="1173.84" width="1.3" height="1.2" fill="#0a0a0a" /><rect x="1648.4" y="1169.3" width="5" height="1.8" fill="#0a0a0a" /><rect x="1649" y="1165.36" width="1.3" height="1.2" fill="#ff1010" /><rect x="1649" y="1161.12" width="1.3" height="1.2" fill="#ff1010" /><rect x="1649" y="1156.88" width="1.3" height="1.2" fill="#ff1010" /><rect x="1649" y="1152.64" width="1.3" height="1.2" fill="#ff1010" /><rect x="1648.4" y="1148.1" width="5" height="1.8" fill="#ff1010" /><g clip-path="url(#clipsl)"><text x="1657.9" y="1259" font-size="11" fill="#111" letter-spacing="-0.4" >0</text><text x="1657.9" y="1237.8" font-size="11" fill="#111" letter-spacing="-0.4" >20</text><text x="1657.9" y="1216.6" font-size="11" fill="#111" letter-spacing="-0.4" >40</text><text x="1657.9" y="1195.4" font-size="11" fill="#111" letter-spacing="-0.4" >60</text><text x="1657.9" y="1174.2" font-size="11" fill="#111" letter-spacing="-0.4" >80</text><text x="1657.9" y="1153" font-size="11" fill="#111" letter-spacing="-0.4" >100</text></g><path d="M1781.8 1144.8 L1846.4 1121.8 L1911.6 1144.8 V1254.4 H1781.8 Z" fill="url(#tankg)"/><path d="M1781.8 1144.8 L1846.4 1121.8 L1911.6 1144.8 Z" fill="#999" opacity="0.55"/><rect x="1773.8" y="1254.4" width="146.2" height="8.8" fill="url(#tankg)" /><rect x="1784.7" y="1240.6" width="121.8" height="11.8" fill="#5555fa" /><rect x="1865.3" y="1249.56" width="1.3" height="1.2" fill="#0a0a0a" /><rect x="1865.3" y="1245.32" width="1.3" height="1.2" fill="#0a0a0a" /><rect x="1865.3" y="1241.08" width="1.3" height="1.2" fill="#0a0a0a" /><rect x="1865.3" y="1236.84" width="1.3" height="1.2" fill="#0a0a0a" /><rect x="1864.7" y="1232.3" width="5" height="1.8" fill="#0a0a0a" /><rect x="1865.3" y="1228.36" width="1.3" height="1.2" fill="#0a0a0a" /><rect x="1865.3" y="1224.12" width="1.3" height="1.2" fill="#0a0a0a" /><rect x="1865.3" y="1219.88" width="1.3" height="1.2" fill="#0a0a0a" /><rect x="1865.3" y="1215.64" width="1.3" height="1.2" fill="#0a0a0a" /><rect x="1864.7" y="1211.1" width="5" height="1.8" fill="#0a0a0a" /><rect x="1865.3" y="1207.16" width="1.3" height="1.2" fill="#0a0a0a" /><rect x="1865.3" y="1202.92" width="1.3" height="1.2" fill="#0a0a0a" /><rect x="1865.3" y="1198.68" width="1.3" height="1.2" fill="#0a0a0a" /><rect x="1865.3" y="1194.44" width="1.3" height="1.2" fill="#0a0a0a" /><rect x="1864.7" y="1189.9" width="5" height="1.8" fill="#0a0a0a" /><rect x="1865.3" y="1185.96" width="1.3" height="1.2" fill="#0a0a0a" /><rect x="1865.3" y="1181.72" width="1.3" height="1.2" fill="#0a0a0a" /><rect x="1865.3" y="1177.48" width="1.3" height="1.2" fill="#0a0a0a" /><rect x="1865.3" y="1173.24" width="1.3" height="1.2" fill="#0a0a0a" /><rect x="1864.7" y="1168.7" width="5" height="1.8" fill="#0a0a0a" /><rect x="1865.3" y="1164.76" width="1.3" height="1.2" fill="#ff1010" /><rect x="1865.3" y="1160.52" width="1.3" height="1.2" fill="#ff1010" /><rect x="1865.3" y="1156.28" width="1.3" height="1.2" fill="#ff1010" /><rect x="1865.3" y="1152.04" width="1.3" height="1.2" fill="#ff1010" /><rect x="1864.7" y="1147.5" width="5" height="1.8" fill="#ff1010" /><g clip-path="url(#clipsr)"><text x="1874.3" y="1258.4" font-size="11" fill="#111" letter-spacing="-0.4" >0</text><text x="1874.3" y="1237.2" font-size="11" fill="#111" letter-spacing="-0.4" >20</text><text x="1874.3" y="1216" font-size="11" fill="#111" letter-spacing="-0.4" >40</text><text x="1874.3" y="1194.8" font-size="11" fill="#111" letter-spacing="-0.4" >60</text><text x="1874.3" y="1173.6" font-size="11" fill="#111" letter-spacing="-0.4" >80</text><text x="1874.3" y="1152.4" font-size="11" fill="#111" letter-spacing="-0.4" >100</text></g><path d="M1469.6 1000.8 H1514.6 L1492 1033 L1514.6 1065.7 H1469.6 L1492 1033 Z" fill="url(#redv)"/><rect x="1494" y="1032.4" width="18.5" height="1.3" fill="#98aabb" /><rect x="1512.2" y="1011" width="22.5" height="44" fill="url(#redact)" /><rect x="1491.2" y="1066" width="1.2" height="10.5" fill="#98aabb" /><rect x="1756.2" y="1036.2" width="28.7" height="11.7" fill="url(#grnact)" /><rect x="1770.4" y="1047.8" width="1.3" height="11" fill="#a8b4bc" /><path d="M1750 1047.3 L1771 1059.4 L1750 1071.4 Z M1791.8 1047.3 L1771 1059.4 L1791.8 1071.4 Z" fill="url(#grnv)"/><rect x="1040.8" y="1074.9" width="188.7" height="7.4" fill="#858585" stroke="#6a6a6a" stroke-width="1" /><rect x="1040.8" y="947.6" width="164.6" height="105.6" fill="url(#motorg)" stroke="#747474" stroke-width="1" /><rect x="1051.8" y="951" width="138.6" height="44.8" fill="#9a9a9a" stroke="#c6c6c6" stroke-width="1.2" rx="3" /><rect x="1052.8" y="952" width="136.6" height="42.8" fill="none" stroke="#808080" stroke-width="0.8" rx="2.4" /><text x="1064.5" y="964.4" font-size="10.5" fill="#1c1c1c" text-anchor="middle" letter-spacing="-0.3" >0</text><text x="1087.5" y="964.4" font-size="10.5" fill="#1c1c1c" text-anchor="middle" letter-spacing="-0.3" >20</text><text x="1110.5" y="964.4" font-size="10.5" fill="#1c1c1c" text-anchor="middle" letter-spacing="-0.3" >40</text><text x="1133.5" y="964.4" font-size="10.5" fill="#1c1c1c" text-anchor="middle" letter-spacing="-0.3" >60</text><text x="1156.5" y="964.4" font-size="10.5" fill="#1c1c1c" text-anchor="middle" letter-spacing="-0.3" >80</text><text x="1179.5" y="964.4" font-size="10.5" fill="#1c1c1c" text-anchor="middle" letter-spacing="-0.3" >100</text><rect x="1062" y="969.3" width="5" height="17.7" fill="#0a0a0a" /><rect x="1068.2" y="969.3" width="3.9" height="17.7" fill="#0a0a0a" /><text x="1091.65" y="1013.5" font-size="18" fill="#a9a9a9" textLength="58.3" >Current</text><path d="M1051.2 1074.4 V1007.8 A6.4 6.4 0 0 1 1064 1007.8 V1074.4 Z" fill="url(#legg)" stroke="#7c7c7c" stroke-width="0.9"/><path d="M1182.4 1074.4 V1007.8 A6.4 6.4 0 0 1 1195.2 1007.8 V1074.4 Z" fill="url(#legg)" stroke="#7c7c7c" stroke-width="0.9"/><rect x="1206" y="960.4" width="10.4" height="80" fill="url(#copg)" /><rect x="1216.9" y="957.9" width="9.3" height="85.3" fill="url(#plateg)" stroke="#7a7a7a" stroke-width="1" /><rect x="1227" y="995.9" width="2.4" height="9.4" fill="#d8d8d8" stroke="#9a9a9a" stroke-width="0.6" /><rect x="1165.2" y="1143.3" width="196" height="114" fill="url(#gbox)" /><g transform="translate(1225.8 1200.3) scale(1 1.12)"><rect x="-7.52" y="-37.6" width="15.04" height="21.6" transform="rotate(0)" fill="#80beff" stroke="#2d8bef" stroke-width="1"/><rect x="-7.52" y="-37.6" width="15.04" height="21.6" transform="rotate(45)" fill="#80beff" stroke="#2d8bef" stroke-width="1"/><rect x="-7.52" y="-37.6" width="15.04" height="21.6" transform="rotate(90)" fill="#80beff" stroke="#2d8bef" stroke-width="1"/><rect x="-7.52" y="-37.6" width="15.04" height="21.6" transform="rotate(135)" fill="#80beff" stroke="#2d8bef" stroke-width="1"/><rect x="-7.52" y="-37.6" width="15.04" height="21.6" transform="rotate(180)" fill="#80beff" stroke="#2d8bef" stroke-width="1"/><rect x="-7.52" y="-37.6" width="15.04" height="21.6" transform="rotate(225)" fill="#80beff" stroke="#2d8bef" stroke-width="1"/><rect x="-7.52" y="-37.6" width="15.04" height="21.6" transform="rotate(270)" fill="#80beff" stroke="#2d8bef" stroke-width="1"/><rect x="-7.52" y="-37.6" width="15.04" height="21.6" transform="rotate(315)" fill="#80beff" stroke="#2d8bef" stroke-width="1"/><circle cx="0" cy="0" r="20" fill="#80beff" stroke="#2d8bef" stroke-width="1"/></g><g transform="translate(1302.4 1200.3) scale(1 1.12)"><rect x="-7.52" y="-37.6" width="15.04" height="21.6" transform="rotate(22.5)" fill="#80beff" stroke="#2d8bef" stroke-width="1"/><rect x="-7.52" y="-37.6" width="15.04" height="21.6" transform="rotate(67.5)" fill="#80beff" stroke="#2d8bef" stroke-width="1"/><rect x="-7.52" y="-37.6" width="15.04" height="21.6" transform="rotate(112.5)" fill="#80beff" stroke="#2d8bef" stroke-width="1"/><rect x="-7.52" y="-37.6" width="15.04" height="21.6" transform="rotate(157.5)" fill="#80beff" stroke="#2d8bef" stroke-width="1"/><rect x="-7.52" y="-37.6" width="15.04" height="21.6" transform="rotate(202.5)" fill="#80beff" stroke="#2d8bef" stroke-width="1"/><rect x="-7.52" y="-37.6" width="15.04" height="21.6" transform="rotate(247.5)" fill="#80beff" stroke="#2d8bef" stroke-width="1"/><rect x="-7.52" y="-37.6" width="15.04" height="21.6" transform="rotate(292.5)" fill="#80beff" stroke="#2d8bef" stroke-width="1"/><rect x="-7.52" y="-37.6" width="15.04" height="21.6" transform="rotate(337.5)" fill="#80beff" stroke="#2d8bef" stroke-width="1"/><circle cx="0" cy="0" r="20" fill="#80beff" stroke="#2d8bef" stroke-width="1"/></g><rect x="1028.4" y="1112.9" width="130.8" height="64.8" fill="url(#geng)" stroke="#55556a" stroke-width="1" /><rect x="1058.3" y="1118.2" width="71.4" height="54.2" fill="#33b0ff" stroke="#1c4d74" stroke-width="1.2" rx="2" /><line x1="1075.9" y1="1118.6" x2="1075.9" y2="1172" stroke="#1c5a88" stroke-width="0.9" /><line x1="1058.7" y1="1145.8" x2="1129.3" y2="1145.8" stroke="#1c5a88" stroke-width="0.9" /><path d="M1058.7 1145.8 L1059.88 1148.47 L1061.05 1151.1 L1062.23 1153.68 L1063.41 1156.17 L1064.58 1158.55 L1065.76 1160.79 L1066.94 1162.86 L1068.11 1164.75 L1069.29 1166.43 L1070.47 1167.88 L1071.64 1169.1 L1072.82 1170.05 L1074 1170.74 L1075.17 1171.16 L1076.35 1171.3 L1077.53 1171.16 L1078.7 1170.74 L1079.88 1170.05 L1081.06 1169.1 L1082.23 1167.88 L1083.41 1166.43 L1084.59 1164.75 L1085.76 1162.86 L1086.94 1160.79 L1088.12 1158.55 L1089.29 1156.17 L1090.47 1153.68 L1091.65 1151.1 L1092.82 1148.47 L1094 1145.8 L1095.18 1143.13 L1096.35 1140.5 L1097.53 1137.92 L1098.71 1135.43 L1099.88 1133.05 L1101.06 1130.81 L1102.24 1128.74 L1103.41 1126.85 L1104.59 1125.17 L1105.77 1123.72 L1106.94 1122.5 L1108.12 1121.55 L1109.3 1120.86 L1110.47 1120.44 L1111.65 1120.3 L1112.83 1120.44 L1114 1120.86 L1115.18 1121.55 L1116.36 1122.5 L1117.53 1123.72 L1118.71 1125.17 L1119.89 1126.85 L1121.06 1128.74 L1122.24 1130.81 L1123.42 1133.05 L1124.59 1135.43 L1125.77 1137.92 L1126.95 1140.5 L1128.12 1143.13 L1129.3 1145.8" fill="none" stroke="#7df4ff" stroke-width="1.5"/><rect x="1037.45" y="1123.35" width="10.1" height="4.9" fill="#e4e4e4" stroke="#8a8a8a" stroke-width="0.7" rx="1" /><rect x="1037.45" y="1135.05" width="10.1" height="4.9" fill="#e4e4e4" stroke="#8a8a8a" stroke-width="0.7" rx="1" /><rect x="1037.45" y="1146.75" width="10.1" height="4.9" fill="#e4e4e4" stroke="#8a8a8a" stroke-width="0.7" rx="1" /><circle cx="1042.5" cy="1164" r="3.9" fill="#e8e8e8" stroke="#4a4a4a" stroke-width="0.9"/><circle cx="1042.5" cy="1164" r="1.6" fill="#666"/><rect x="1139.85" y="1123.35" width="10.1" height="4.9" fill="#e4e4e4" stroke="#8a8a8a" stroke-width="0.7" rx="1" /><rect x="1139.85" y="1135.05" width="10.1" height="4.9" fill="#e4e4e4" stroke="#8a8a8a" stroke-width="0.7" rx="1" /><rect x="1139.85" y="1146.75" width="10.1" height="4.9" fill="#e4e4e4" stroke="#8a8a8a" stroke-width="0.7" rx="1" /><circle cx="1144.9" cy="1164" r="3.9" fill="#e8e8e8" stroke="#4a4a4a" stroke-width="0.9"/><circle cx="1144.9" cy="1164" r="1.6" fill="#666"/><text x="1071.8" y="1195.2" font-size="18" fill="#a6a6a6" textLength="43.4" >Gen2</text><rect x="1027.9" y="1206.1" width="132" height="65" fill="url(#geng)" stroke="#55556a" stroke-width="1" /><rect x="1057.8" y="1211.4" width="71.4" height="54.2" fill="#33b0ff" stroke="#1c4d74" stroke-width="1.2" rx="2" /><line x1="1075.4" y1="1211.8" x2="1075.4" y2="1265.2" stroke="#1c5a88" stroke-width="0.9" /><line x1="1058.2" y1="1239" x2="1128.8" y2="1239" stroke="#1c5a88" stroke-width="0.9" /><path d="M1058.2 1239 L1059.38 1241.67 L1060.55 1244.3 L1061.73 1246.88 L1062.91 1249.37 L1064.08 1251.75 L1065.26 1253.99 L1066.44 1256.06 L1067.61 1257.95 L1068.79 1259.63 L1069.97 1261.08 L1071.14 1262.3 L1072.32 1263.25 L1073.5 1263.94 L1074.67 1264.36 L1075.85 1264.5 L1077.03 1264.36 L1078.2 1263.94 L1079.38 1263.25 L1080.56 1262.3 L1081.73 1261.08 L1082.91 1259.63 L1084.09 1257.95 L1085.26 1256.06 L1086.44 1253.99 L1087.62 1251.75 L1088.79 1249.37 L1089.97 1246.88 L1091.15 1244.3 L1092.32 1241.67 L1093.5 1239 L1094.68 1236.33 L1095.85 1233.7 L1097.03 1231.12 L1098.21 1228.63 L1099.38 1226.25 L1100.56 1224.01 L1101.74 1221.94 L1102.91 1220.05 L1104.09 1218.37 L1105.27 1216.92 L1106.44 1215.7 L1107.62 1214.75 L1108.8 1214.06 L1109.97 1213.64 L1111.15 1213.5 L1112.33 1213.64 L1113.5 1214.06 L1114.68 1214.75 L1115.86 1215.7 L1117.03 1216.92 L1118.21 1218.37 L1119.39 1220.05 L1120.56 1221.94 L1121.74 1224.01 L1122.92 1226.25 L1124.09 1228.63 L1125.27 1231.12 L1126.45 1233.7 L1127.62 1236.33 L1128.8 1239" fill="none" stroke="#7df4ff" stroke-width="1.5"/><rect x="1036.95" y="1216.55" width="10.1" height="4.9" fill="#e4e4e4" stroke="#8a8a8a" stroke-width="0.7" rx="1" /><rect x="1036.95" y="1228.25" width="10.1" height="4.9" fill="#e4e4e4" stroke="#8a8a8a" stroke-width="0.7" rx="1" /><rect x="1036.95" y="1239.95" width="10.1" height="4.9" fill="#e4e4e4" stroke="#8a8a8a" stroke-width="0.7" rx="1" /><circle cx="1042" cy="1257.2" r="3.9" fill="#e8e8e8" stroke="#4a4a4a" stroke-width="0.9"/><circle cx="1042" cy="1257.2" r="1.6" fill="#666"/><rect x="1139.35" y="1216.55" width="10.1" height="4.9" fill="#e4e4e4" stroke="#8a8a8a" stroke-width="0.7" rx="1" /><rect x="1139.35" y="1228.25" width="10.1" height="4.9" fill="#e4e4e4" stroke="#8a8a8a" stroke-width="0.7" rx="1" /><rect x="1139.35" y="1239.95" width="10.1" height="4.9" fill="#e4e4e4" stroke="#8a8a8a" stroke-width="0.7" rx="1" /><circle cx="1144.4" cy="1257.2" r="3.9" fill="#e8e8e8" stroke="#4a4a4a" stroke-width="0.9"/><circle cx="1144.4" cy="1257.2" r="1.6" fill="#666"/><text x="1071.8" y="1288.8" font-size="18" fill="#a6a6a6" textLength="41.8" >Gen1</text></g>
</svg>
</body></html>
